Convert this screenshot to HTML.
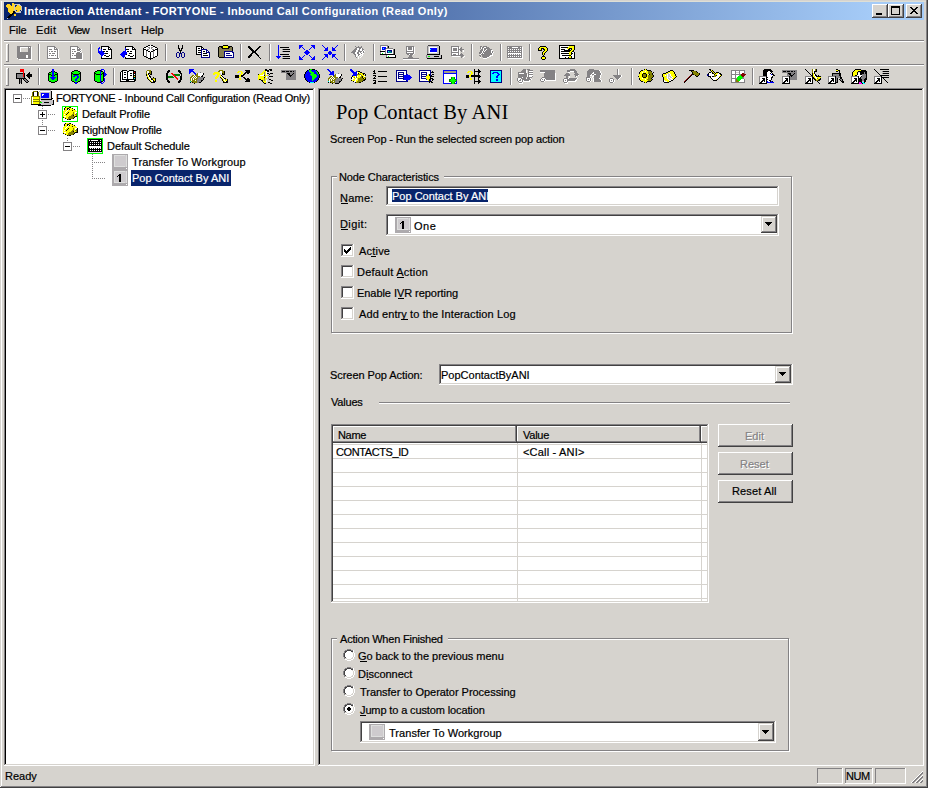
<!DOCTYPE html>
<html><head><meta charset="utf-8"><style>
html,body{margin:0;padding:0;width:929px;height:789px;overflow:hidden;background:#ffffff}
i{position:absolute;display:block}
b{position:absolute;font:11px "Liberation Sans",sans-serif;line-height:13px;white-space:pre;font-weight:normal;-webkit-text-stroke-width:0.2px}
svg{position:absolute}
</style></head><body>
<i style="left:0px;top:0px;width:929px;height:789px;background:#ffffff;"></i>
<i style="left:0px;top:0px;width:928px;height:788px;background:#d6d3ce;"></i>
<i style="left:0px;top:1px;width:926px;height:1px;background:#dedfd6;"></i>
<i style="left:1px;top:1px;width:1px;height:786px;background:#ffffff;"></i>
<i style="left:926px;top:0px;width:1px;height:787px;background:#848284;"></i>
<i style="left:927px;top:0px;width:1px;height:788px;background:#424142;"></i>
<i style="left:1px;top:786px;width:926px;height:1px;background:#848284;"></i>
<i style="left:0px;top:786px;width:1px;height:1px;background:#f7f3f7;"></i>
<i style="left:0px;top:787px;width:928px;height:1px;background:#424142;"></i>
<i style="left:4px;top:2px;width:920px;height:18px;background:linear-gradient(90deg,#08246b 0px,#a5cbf7 867px,#a5cbf7 920px);"></i>
<b style="left:24px;top:5px;color:#ffffff;letter-spacing:0.361px;font:bold 11px 'Liberation Sans';line-height:13px;-webkit-text-stroke-width:0;">Interaction Attendant - FORTYONE - Inbound Call Configuration (Read Only)</b>
<i style="left:872px;top:4px;width:16px;height:14px;background:#d6d3ce;"></i>
<i style="left:872px;top:4px;width:16px;height:1px;background:#ffffff;"></i>
<i style="left:872px;top:4px;width:1px;height:14px;background:#ffffff;"></i>
<i style="left:872px;top:17px;width:16px;height:1px;background:#424142;"></i>
<i style="left:887px;top:4px;width:1px;height:14px;background:#424142;"></i>
<i style="left:873px;top:5px;width:14px;height:1px;background:#d6d3ce;"></i>
<i style="left:873px;top:5px;width:1px;height:12px;background:#d6d3ce;"></i>
<i style="left:873px;top:16px;width:14px;height:1px;background:#848284;"></i>
<i style="left:886px;top:5px;width:1px;height:12px;background:#848284;"></i>
<i style="left:888px;top:4px;width:16px;height:14px;background:#d6d3ce;"></i>
<i style="left:888px;top:4px;width:16px;height:1px;background:#ffffff;"></i>
<i style="left:888px;top:4px;width:1px;height:14px;background:#ffffff;"></i>
<i style="left:888px;top:17px;width:16px;height:1px;background:#424142;"></i>
<i style="left:903px;top:4px;width:1px;height:14px;background:#424142;"></i>
<i style="left:889px;top:5px;width:14px;height:1px;background:#d6d3ce;"></i>
<i style="left:889px;top:5px;width:1px;height:12px;background:#d6d3ce;"></i>
<i style="left:889px;top:16px;width:14px;height:1px;background:#848284;"></i>
<i style="left:902px;top:5px;width:1px;height:12px;background:#848284;"></i>
<i style="left:906px;top:4px;width:16px;height:14px;background:#d6d3ce;"></i>
<i style="left:906px;top:4px;width:16px;height:1px;background:#ffffff;"></i>
<i style="left:906px;top:4px;width:1px;height:14px;background:#ffffff;"></i>
<i style="left:906px;top:17px;width:16px;height:1px;background:#424142;"></i>
<i style="left:921px;top:4px;width:1px;height:14px;background:#424142;"></i>
<i style="left:907px;top:5px;width:14px;height:1px;background:#d6d3ce;"></i>
<i style="left:907px;top:5px;width:1px;height:12px;background:#d6d3ce;"></i>
<i style="left:907px;top:16px;width:14px;height:1px;background:#848284;"></i>
<i style="left:920px;top:5px;width:1px;height:12px;background:#848284;"></i>
<i style="left:876px;top:13px;width:6px;height:2px;background:#000000;"></i>
<i style="left:891px;top:6px;width:9px;height:1px;background:#000000;"></i>
<i style="left:891px;top:6px;width:1px;height:9px;background:#000000;"></i>
<i style="left:891px;top:14px;width:9px;height:1px;background:#000000;"></i>
<i style="left:899px;top:6px;width:1px;height:9px;background:#000000;"></i>
<i style="left:891px;top:7px;width:9px;height:1px;background:#000000;"></i>
<svg style="position:absolute;left:906px;top:4px" width="16" height="14" shape-rendering="crispEdges"><rect x="4" y="3" width="2" height="1" fill="#000000"/><rect x="10" y="3" width="2" height="1" fill="#000000"/><rect x="5" y="4" width="2" height="1" fill="#000000"/><rect x="9" y="4" width="2" height="1" fill="#000000"/><rect x="6" y="5" width="2" height="1" fill="#000000"/><rect x="8" y="5" width="2" height="1" fill="#000000"/><rect x="7" y="6" width="2" height="1" fill="#000000"/><rect x="7" y="6" width="2" height="1" fill="#000000"/><rect x="8" y="7" width="2" height="1" fill="#000000"/><rect x="6" y="7" width="2" height="1" fill="#000000"/><rect x="9" y="8" width="2" height="1" fill="#000000"/><rect x="5" y="8" width="2" height="1" fill="#000000"/><rect x="10" y="9" width="2" height="1" fill="#000000"/><rect x="4" y="9" width="2" height="1" fill="#000000"/></svg>
<b style="left:9px;top:24px;color:#000000;letter-spacing:0.000px;">File</b>
<b style="left:36px;top:24px;color:#000000;letter-spacing:0.333px;">Edit</b>
<b style="left:68px;top:24px;color:#000000;letter-spacing:-0.667px;">View</b>
<b style="left:101px;top:24px;color:#000000;letter-spacing:0.600px;">Insert</b>
<b style="left:141px;top:24px;color:#000000;letter-spacing:0.000px;">Help</b>
<i style="left:4px;top:40px;width:920px;height:1px;background:#848284;"></i>
<i style="left:4px;top:41px;width:920px;height:1px;background:#ffffff;"></i>
<i style="left:4px;top:64px;width:920px;height:1px;background:#848284;"></i>
<i style="left:4px;top:65px;width:920px;height:1px;background:#ffffff;"></i>
<i style="left:6px;top:44px;width:1px;height:17px;background:#ffffff;"></i>
<i style="left:6px;top:44px;width:2px;height:1px;background:#ffffff;"></i>
<i style="left:8px;top:44px;width:1px;height:18px;background:#848284;"></i>
<i style="left:6px;top:61px;width:3px;height:1px;background:#848284;"></i>
<i style="left:6px;top:68px;width:1px;height:17px;background:#ffffff;"></i>
<i style="left:6px;top:68px;width:2px;height:1px;background:#ffffff;"></i>
<i style="left:8px;top:68px;width:1px;height:18px;background:#848284;"></i>
<i style="left:6px;top:85px;width:3px;height:1px;background:#848284;"></i>
<i style="left:38px;top:44px;width:1px;height:17px;background:#848284;"></i>
<i style="left:39px;top:44px;width:1px;height:17px;background:#ffffff;"></i>
<i style="left:90px;top:44px;width:1px;height:17px;background:#848284;"></i>
<i style="left:91px;top:44px;width:1px;height:17px;background:#ffffff;"></i>
<i style="left:165px;top:44px;width:1px;height:17px;background:#848284;"></i>
<i style="left:166px;top:44px;width:1px;height:17px;background:#ffffff;"></i>
<i style="left:240px;top:44px;width:1px;height:17px;background:#848284;"></i>
<i style="left:241px;top:44px;width:1px;height:17px;background:#ffffff;"></i>
<i style="left:269px;top:44px;width:1px;height:17px;background:#848284;"></i>
<i style="left:270px;top:44px;width:1px;height:17px;background:#ffffff;"></i>
<i style="left:344px;top:44px;width:1px;height:17px;background:#848284;"></i>
<i style="left:345px;top:44px;width:1px;height:17px;background:#ffffff;"></i>
<i style="left:373px;top:44px;width:1px;height:17px;background:#848284;"></i>
<i style="left:374px;top:44px;width:1px;height:17px;background:#ffffff;"></i>
<i style="left:471px;top:44px;width:1px;height:17px;background:#848284;"></i>
<i style="left:472px;top:44px;width:1px;height:17px;background:#ffffff;"></i>
<i style="left:500px;top:44px;width:1px;height:17px;background:#848284;"></i>
<i style="left:501px;top:44px;width:1px;height:17px;background:#ffffff;"></i>
<i style="left:529px;top:44px;width:1px;height:17px;background:#848284;"></i>
<i style="left:530px;top:44px;width:1px;height:17px;background:#ffffff;"></i>
<i style="left:38px;top:68px;width:1px;height:17px;background:#848284;"></i>
<i style="left:39px;top:68px;width:1px;height:17px;background:#ffffff;"></i>
<i style="left:113px;top:68px;width:1px;height:17px;background:#848284;"></i>
<i style="left:114px;top:68px;width:1px;height:17px;background:#ffffff;"></i>
<i style="left:510px;top:68px;width:1px;height:17px;background:#848284;"></i>
<i style="left:511px;top:68px;width:1px;height:17px;background:#ffffff;"></i>
<i style="left:631px;top:68px;width:1px;height:17px;background:#848284;"></i>
<i style="left:632px;top:68px;width:1px;height:17px;background:#ffffff;"></i>
<i style="left:752px;top:68px;width:1px;height:17px;background:#848284;"></i>
<i style="left:753px;top:68px;width:1px;height:17px;background:#ffffff;"></i>
<i style="left:4px;top:88px;width:311px;height:678px;background:#ffffff;"></i>
<i style="left:4px;top:88px;width:311px;height:1px;background:#848284;"></i>
<i style="left:4px;top:88px;width:1px;height:678px;background:#848284;"></i>
<i style="left:4px;top:765px;width:311px;height:1px;background:#ffffff;"></i>
<i style="left:314px;top:88px;width:1px;height:678px;background:#ffffff;"></i>
<i style="left:5px;top:89px;width:309px;height:1px;background:#000000;"></i>
<i style="left:5px;top:89px;width:1px;height:676px;background:#000000;"></i>
<i style="left:5px;top:764px;width:309px;height:1px;background:#d6d3ce;"></i>
<i style="left:313px;top:89px;width:1px;height:676px;background:#d6d3ce;"></i>
<b style="left:56px;top:92px;color:#000000;letter-spacing:-0.188px;">FORTYONE - Inbound Call Configuration (Read Only)</b>
<b style="left:82px;top:108px;color:#000000;letter-spacing:-0.071px;">Default Profile</b>
<b style="left:82px;top:124px;color:#000000;letter-spacing:-0.133px;">RightNow Profile</b>
<b style="left:107px;top:140px;color:#000000;letter-spacing:-0.067px;">Default Schedule</b>
<b style="left:132px;top:156px;color:#000000;letter-spacing:0.100px;">Transfer To Workgroup</b>
<i style="left:131px;top:170px;width:100px;height:16px;background:#08246b;"></i>
<b style="left:132px;top:172px;color:#ffffff;letter-spacing:0.000px;">Pop Contact By ANI</b>
<i style="left:318px;top:88px;width:606px;height:678px;background:#d6d3ce;"></i>
<i style="left:318px;top:88px;width:606px;height:1px;background:#848284;"></i>
<i style="left:318px;top:88px;width:1px;height:678px;background:#848284;"></i>
<i style="left:318px;top:765px;width:606px;height:1px;background:#ffffff;"></i>
<i style="left:923px;top:88px;width:1px;height:678px;background:#ffffff;"></i>
<i style="left:319px;top:89px;width:604px;height:1px;background:#000000;"></i>
<i style="left:319px;top:89px;width:1px;height:676px;background:#000000;"></i>
<i style="left:319px;top:764px;width:604px;height:1px;background:#d6d3ce;"></i>
<i style="left:922px;top:89px;width:1px;height:676px;background:#d6d3ce;"></i>
<b style="left:336px;top:100px;color:#000000;letter-spacing:0.118px;font:normal 20.5px 'Liberation Serif';line-height:24px;-webkit-text-stroke-width:0;">Pop Contact By ANI</b>
<b style="left:330px;top:133px;color:#000000;letter-spacing:-0.109px;">Screen Pop - Run the selected screen pop action</b>
<i style="left:332px;top:177px;width:461px;height:1px;background:#ffffff;"></i>
<i style="left:332px;top:177px;width:1px;height:157px;background:#ffffff;"></i>
<i style="left:332px;top:333px;width:461px;height:1px;background:#ffffff;"></i>
<i style="left:792px;top:177px;width:1px;height:157px;background:#ffffff;"></i>
<i style="left:331px;top:176px;width:461px;height:1px;background:#848284;"></i>
<i style="left:331px;top:176px;width:1px;height:157px;background:#848284;"></i>
<i style="left:331px;top:332px;width:461px;height:1px;background:#848284;"></i>
<i style="left:791px;top:176px;width:1px;height:157px;background:#848284;"></i>
<i style="left:337px;top:170px;width:107px;height:12px;background:#d6d3ce;"></i>
<b style="left:339px;top:171px;color:#000000;letter-spacing:-0.105px;">Node Characteristics</b>
<b style="left:340px;top:192px;color:#000000;letter-spacing:0.250px;">Name:</b>
<i style="left:341px;top:203px;width:7px;height:1px;background:#000000;"></i>
<i style="left:386px;top:186px;width:393px;height:20px;background:#ffffff;"></i>
<i style="left:386px;top:186px;width:393px;height:1px;background:#848284;"></i>
<i style="left:386px;top:186px;width:1px;height:20px;background:#848284;"></i>
<i style="left:386px;top:205px;width:393px;height:1px;background:#ffffff;"></i>
<i style="left:778px;top:186px;width:1px;height:20px;background:#ffffff;"></i>
<i style="left:387px;top:187px;width:391px;height:1px;background:#424142;"></i>
<i style="left:387px;top:187px;width:1px;height:18px;background:#424142;"></i>
<i style="left:387px;top:204px;width:391px;height:1px;background:#d6d3ce;"></i>
<i style="left:777px;top:187px;width:1px;height:18px;background:#d6d3ce;"></i>
<i style="left:392px;top:189px;width:96px;height:13px;background:#08246b;"></i>
<b style="left:392px;top:190px;color:#ffffff;letter-spacing:0.000px;">Pop Contact By ANI</b>
<b style="left:340px;top:218px;color:#000000;letter-spacing:0.400px;">Digit:</b>
<i style="left:341px;top:229px;width:7px;height:1px;background:#000000;"></i>
<i style="left:386px;top:214px;width:393px;height:22px;background:#ffffff;"></i>
<i style="left:386px;top:214px;width:393px;height:1px;background:#848284;"></i>
<i style="left:386px;top:214px;width:1px;height:22px;background:#848284;"></i>
<i style="left:386px;top:235px;width:393px;height:1px;background:#ffffff;"></i>
<i style="left:778px;top:214px;width:1px;height:22px;background:#ffffff;"></i>
<i style="left:387px;top:215px;width:391px;height:1px;background:#424142;"></i>
<i style="left:387px;top:215px;width:1px;height:20px;background:#424142;"></i>
<i style="left:387px;top:234px;width:391px;height:1px;background:#d6d3ce;"></i>
<i style="left:777px;top:215px;width:1px;height:20px;background:#d6d3ce;"></i>
<i style="left:761px;top:216px;width:16px;height:17px;background:#d6d3ce;"></i>
<i style="left:761px;top:216px;width:16px;height:1px;background:#d6d3ce;"></i>
<i style="left:761px;top:216px;width:1px;height:17px;background:#d6d3ce;"></i>
<i style="left:761px;top:232px;width:16px;height:1px;background:#424142;"></i>
<i style="left:776px;top:216px;width:1px;height:17px;background:#424142;"></i>
<i style="left:762px;top:217px;width:14px;height:1px;background:#ffffff;"></i>
<i style="left:762px;top:217px;width:1px;height:15px;background:#ffffff;"></i>
<i style="left:762px;top:231px;width:14px;height:1px;background:#848284;"></i>
<i style="left:775px;top:217px;width:1px;height:15px;background:#848284;"></i>
<b style="left:414px;top:220px;color:#000000;letter-spacing:0.500px;">One</b>
<i style="left:341px;top:244px;width:13px;height:13px;background:#ffffff;"></i>
<i style="left:341px;top:244px;width:13px;height:1px;background:#848284;"></i>
<i style="left:341px;top:244px;width:1px;height:13px;background:#848284;"></i>
<i style="left:341px;top:256px;width:13px;height:1px;background:#ffffff;"></i>
<i style="left:353px;top:244px;width:1px;height:13px;background:#ffffff;"></i>
<i style="left:342px;top:245px;width:11px;height:1px;background:#424142;"></i>
<i style="left:342px;top:245px;width:1px;height:11px;background:#424142;"></i>
<i style="left:342px;top:255px;width:11px;height:1px;background:#d6d3ce;"></i>
<i style="left:352px;top:245px;width:1px;height:11px;background:#d6d3ce;"></i>
<b style="left:359px;top:245px;color:#000000;letter-spacing:0.200px;">Active</b>
<i style="left:341px;top:265px;width:13px;height:13px;background:#ffffff;"></i>
<i style="left:341px;top:265px;width:13px;height:1px;background:#848284;"></i>
<i style="left:341px;top:265px;width:1px;height:13px;background:#848284;"></i>
<i style="left:341px;top:277px;width:13px;height:1px;background:#ffffff;"></i>
<i style="left:353px;top:265px;width:1px;height:13px;background:#ffffff;"></i>
<i style="left:342px;top:266px;width:11px;height:1px;background:#424142;"></i>
<i style="left:342px;top:266px;width:1px;height:11px;background:#424142;"></i>
<i style="left:342px;top:276px;width:11px;height:1px;background:#d6d3ce;"></i>
<i style="left:352px;top:266px;width:1px;height:11px;background:#d6d3ce;"></i>
<b style="left:357px;top:266px;color:#000000;letter-spacing:0.231px;">Default Action</b>
<i style="left:341px;top:286px;width:13px;height:13px;background:#ffffff;"></i>
<i style="left:341px;top:286px;width:13px;height:1px;background:#848284;"></i>
<i style="left:341px;top:286px;width:1px;height:13px;background:#848284;"></i>
<i style="left:341px;top:298px;width:13px;height:1px;background:#ffffff;"></i>
<i style="left:353px;top:286px;width:1px;height:13px;background:#ffffff;"></i>
<i style="left:342px;top:287px;width:11px;height:1px;background:#424142;"></i>
<i style="left:342px;top:287px;width:1px;height:11px;background:#424142;"></i>
<i style="left:342px;top:297px;width:11px;height:1px;background:#d6d3ce;"></i>
<i style="left:352px;top:287px;width:1px;height:11px;background:#d6d3ce;"></i>
<b style="left:357px;top:287px;color:#000000;letter-spacing:-0.053px;">Enable IVR reporting</b>
<i style="left:341px;top:307px;width:13px;height:13px;background:#ffffff;"></i>
<i style="left:341px;top:307px;width:13px;height:1px;background:#848284;"></i>
<i style="left:341px;top:307px;width:1px;height:13px;background:#848284;"></i>
<i style="left:341px;top:319px;width:13px;height:1px;background:#ffffff;"></i>
<i style="left:353px;top:307px;width:1px;height:13px;background:#ffffff;"></i>
<i style="left:342px;top:308px;width:11px;height:1px;background:#424142;"></i>
<i style="left:342px;top:308px;width:1px;height:11px;background:#424142;"></i>
<i style="left:342px;top:318px;width:11px;height:1px;background:#d6d3ce;"></i>
<i style="left:352px;top:308px;width:1px;height:11px;background:#d6d3ce;"></i>
<b style="left:359px;top:308px;color:#000000;letter-spacing:0.097px;">Add entry to the Interaction Log</b>
<svg style="position:absolute;left:341px;top:244px" width="13" height="13" shape-rendering="crispEdges"><path d="M9 3h1v1h-1zM8 4h1v1h-1zM9 4h1v1h-1zM3 5h1v1h-1zM7 5h1v1h-1zM8 5h1v1h-1zM9 5h1v1h-1zM3 6h1v1h-1zM4 6h1v1h-1zM6 6h1v1h-1zM7 6h1v1h-1zM8 6h1v1h-1zM3 7h1v1h-1zM4 7h1v1h-1zM5 7h1v1h-1zM6 7h1v1h-1zM7 7h1v1h-1zM4 8h1v1h-1zM5 8h1v1h-1zM6 8h1v1h-1zM5 9h1v1h-1z" fill="#000000"/></svg>
<b style="left:330px;top:369px;color:#000000;letter-spacing:-0.059px;">Screen Pop Action:</b>
<i style="left:439px;top:364px;width:354px;height:21px;background:#ffffff;"></i>
<i style="left:439px;top:364px;width:354px;height:1px;background:#848284;"></i>
<i style="left:439px;top:364px;width:1px;height:21px;background:#848284;"></i>
<i style="left:439px;top:384px;width:354px;height:1px;background:#ffffff;"></i>
<i style="left:792px;top:364px;width:1px;height:21px;background:#ffffff;"></i>
<i style="left:440px;top:365px;width:352px;height:1px;background:#424142;"></i>
<i style="left:440px;top:365px;width:1px;height:19px;background:#424142;"></i>
<i style="left:440px;top:383px;width:352px;height:1px;background:#d6d3ce;"></i>
<i style="left:791px;top:365px;width:1px;height:19px;background:#d6d3ce;"></i>
<i style="left:775px;top:366px;width:16px;height:17px;background:#d6d3ce;"></i>
<i style="left:775px;top:366px;width:16px;height:1px;background:#d6d3ce;"></i>
<i style="left:775px;top:366px;width:1px;height:17px;background:#d6d3ce;"></i>
<i style="left:775px;top:382px;width:16px;height:1px;background:#424142;"></i>
<i style="left:790px;top:366px;width:1px;height:17px;background:#424142;"></i>
<i style="left:776px;top:367px;width:14px;height:1px;background:#ffffff;"></i>
<i style="left:776px;top:367px;width:1px;height:15px;background:#ffffff;"></i>
<i style="left:776px;top:381px;width:14px;height:1px;background:#848284;"></i>
<i style="left:789px;top:367px;width:1px;height:15px;background:#848284;"></i>
<b style="left:441px;top:369px;color:#000000;letter-spacing:0.000px;">PopContactByANI</b>
<b style="left:331px;top:396px;color:#000000;letter-spacing:-0.200px;">Values</b>
<i style="left:379px;top:402px;width:411px;height:1px;background:#848284;"></i>
<i style="left:379px;top:403px;width:411px;height:1px;background:#ffffff;"></i>
<i style="left:331px;top:424px;width:378px;height:179px;background:#ffffff;"></i>
<i style="left:331px;top:424px;width:378px;height:1px;background:#848284;"></i>
<i style="left:331px;top:424px;width:1px;height:179px;background:#848284;"></i>
<i style="left:331px;top:602px;width:378px;height:1px;background:#ffffff;"></i>
<i style="left:708px;top:424px;width:1px;height:179px;background:#ffffff;"></i>
<i style="left:332px;top:425px;width:376px;height:1px;background:#424142;"></i>
<i style="left:332px;top:425px;width:1px;height:177px;background:#424142;"></i>
<i style="left:332px;top:601px;width:376px;height:1px;background:#d6d3ce;"></i>
<i style="left:707px;top:425px;width:1px;height:177px;background:#d6d3ce;"></i>
<i style="left:333px;top:426px;width:184px;height:17px;background:#d6d3ce;"></i>
<i style="left:333px;top:426px;width:184px;height:1px;background:#ffffff;"></i>
<i style="left:333px;top:426px;width:1px;height:17px;background:#ffffff;"></i>
<i style="left:333px;top:441px;width:184px;height:1px;background:#848284;"></i>
<i style="left:515px;top:426px;width:1px;height:16px;background:#848284;"></i>
<i style="left:333px;top:442px;width:184px;height:1px;background:#424142;"></i>
<i style="left:516px;top:426px;width:1px;height:17px;background:#424142;"></i>
<i style="left:517px;top:426px;width:184px;height:17px;background:#d6d3ce;"></i>
<i style="left:517px;top:426px;width:184px;height:1px;background:#ffffff;"></i>
<i style="left:517px;top:426px;width:1px;height:17px;background:#ffffff;"></i>
<i style="left:517px;top:441px;width:184px;height:1px;background:#848284;"></i>
<i style="left:699px;top:426px;width:1px;height:16px;background:#848284;"></i>
<i style="left:517px;top:442px;width:184px;height:1px;background:#424142;"></i>
<i style="left:700px;top:426px;width:1px;height:17px;background:#424142;"></i>
<i style="left:701px;top:426px;width:6px;height:17px;background:#d6d3ce;"></i>
<i style="left:701px;top:426px;width:6px;height:1px;background:#ffffff;"></i>
<i style="left:701px;top:426px;width:1px;height:17px;background:#ffffff;"></i>
<i style="left:701px;top:441px;width:6px;height:1px;background:#848284;"></i>
<i style="left:701px;top:442px;width:6px;height:1px;background:#424142;"></i>
<i style="left:333px;top:444px;width:374px;height:1px;background:#d6d3ce;"></i>
<i style="left:333px;top:458px;width:374px;height:1px;background:#d6d3ce;"></i>
<i style="left:333px;top:472px;width:374px;height:1px;background:#d6d3ce;"></i>
<i style="left:333px;top:486px;width:374px;height:1px;background:#d6d3ce;"></i>
<i style="left:333px;top:500px;width:374px;height:1px;background:#d6d3ce;"></i>
<i style="left:333px;top:514px;width:374px;height:1px;background:#d6d3ce;"></i>
<i style="left:333px;top:528px;width:374px;height:1px;background:#d6d3ce;"></i>
<i style="left:333px;top:542px;width:374px;height:1px;background:#d6d3ce;"></i>
<i style="left:333px;top:556px;width:374px;height:1px;background:#d6d3ce;"></i>
<i style="left:333px;top:570px;width:374px;height:1px;background:#d6d3ce;"></i>
<i style="left:333px;top:584px;width:374px;height:1px;background:#d6d3ce;"></i>
<i style="left:333px;top:598px;width:374px;height:1px;background:#d6d3ce;"></i>
<i style="left:517px;top:443px;width:1px;height:158px;background:#d6d3ce;"></i>
<i style="left:701px;top:443px;width:1px;height:158px;background:#d6d3ce;"></i>
<b style="left:338px;top:429px;color:#000000;letter-spacing:-0.333px;">Name</b>
<b style="left:523px;top:429px;color:#000000;letter-spacing:-0.250px;">Value</b>
<b style="left:336px;top:446px;color:#000000;letter-spacing:-0.400px;">CONTACTS_ID</b>
<b style="left:523px;top:446px;color:#000000;letter-spacing:0.182px;">&lt;Call - ANI&gt;</b>
<i style="left:718px;top:424px;width:75px;height:23px;background:#d6d3ce;"></i>
<i style="left:718px;top:424px;width:75px;height:1px;background:#ffffff;"></i>
<i style="left:718px;top:424px;width:1px;height:23px;background:#ffffff;"></i>
<i style="left:718px;top:446px;width:75px;height:1px;background:#424142;"></i>
<i style="left:792px;top:424px;width:1px;height:23px;background:#424142;"></i>
<i style="left:719px;top:425px;width:73px;height:1px;background:#d6d3ce;"></i>
<i style="left:719px;top:425px;width:1px;height:21px;background:#d6d3ce;"></i>
<i style="left:719px;top:445px;width:73px;height:1px;background:#848284;"></i>
<i style="left:791px;top:425px;width:1px;height:21px;background:#848284;"></i>
<i style="left:718px;top:452px;width:75px;height:23px;background:#d6d3ce;"></i>
<i style="left:718px;top:452px;width:75px;height:1px;background:#ffffff;"></i>
<i style="left:718px;top:452px;width:1px;height:23px;background:#ffffff;"></i>
<i style="left:718px;top:474px;width:75px;height:1px;background:#424142;"></i>
<i style="left:792px;top:452px;width:1px;height:23px;background:#424142;"></i>
<i style="left:719px;top:453px;width:73px;height:1px;background:#d6d3ce;"></i>
<i style="left:719px;top:453px;width:1px;height:21px;background:#d6d3ce;"></i>
<i style="left:719px;top:473px;width:73px;height:1px;background:#848284;"></i>
<i style="left:791px;top:453px;width:1px;height:21px;background:#848284;"></i>
<i style="left:718px;top:480px;width:75px;height:23px;background:#d6d3ce;"></i>
<i style="left:718px;top:480px;width:75px;height:1px;background:#ffffff;"></i>
<i style="left:718px;top:480px;width:1px;height:23px;background:#ffffff;"></i>
<i style="left:718px;top:502px;width:75px;height:1px;background:#424142;"></i>
<i style="left:792px;top:480px;width:1px;height:23px;background:#424142;"></i>
<i style="left:719px;top:481px;width:73px;height:1px;background:#d6d3ce;"></i>
<i style="left:719px;top:481px;width:1px;height:21px;background:#d6d3ce;"></i>
<i style="left:719px;top:501px;width:73px;height:1px;background:#848284;"></i>
<i style="left:791px;top:481px;width:1px;height:21px;background:#848284;"></i>
<b style="left:746px;top:431px;color:#ffffff;letter-spacing:0.000px;">Edit</b>
<b style="left:745px;top:430px;color:#848284;letter-spacing:0.000px;">Edit</b>
<b style="left:741px;top:459px;color:#ffffff;letter-spacing:0.000px;">Reset</b>
<b style="left:740px;top:458px;color:#848284;letter-spacing:0.000px;">Reset</b>
<b style="left:732px;top:485px;color:#000000;letter-spacing:0.125px;">Reset All</b>
<i style="left:332px;top:639px;width:458px;height:1px;background:#ffffff;"></i>
<i style="left:332px;top:639px;width:1px;height:113px;background:#ffffff;"></i>
<i style="left:332px;top:751px;width:458px;height:1px;background:#ffffff;"></i>
<i style="left:789px;top:639px;width:1px;height:113px;background:#ffffff;"></i>
<i style="left:331px;top:638px;width:458px;height:1px;background:#848284;"></i>
<i style="left:331px;top:638px;width:1px;height:113px;background:#848284;"></i>
<i style="left:331px;top:750px;width:458px;height:1px;background:#848284;"></i>
<i style="left:788px;top:638px;width:1px;height:113px;background:#848284;"></i>
<i style="left:337px;top:632px;width:111px;height:12px;background:#d6d3ce;"></i>
<b style="left:340px;top:633px;color:#000000;letter-spacing:-0.211px;">Action When Finished</b>
<svg style="position:absolute;left:343px;top:649px" width="12" height="12" shape-rendering="crispEdges"><path d="M4 0h4v1h-4zM2 1h2v1h-2zM8 1h2v1h-2zM1 2h1v2h-1zM0 4h1v4h-1zM1 8h1v2h-1z" fill="#848284"/><path d="M4 1h4v1h-4zM2 2h2v1h-2zM8 2h2v1h-2zM2 3h1v1h-1zM1 4h1v4h-1zM2 8h1v1h-1z" fill="#424142"/><path d="M10 1h1v1h-1zM10 2h1v2h-1zM11 4h1v4h-1zM10 8h1v2h-1zM8 10h2v1h-2zM4 11h4v1h-4zM2 10h2v1h-2z" fill="#ffffff"/><path d="M9 3h1v1h-1zM10 4h1v4h-1zM9 8h1v1h-1zM8 9h2v1h-2zM4 10h4v1h-4zM2 9h2v1h-2z" fill="#d6d3ce"/><path d="M4 2h4v1h-4zM3 3h6v1h-6zM2 4h8v4h-8zM3 8h6v1h-6zM4 9h4v1h-4z" fill="#ffffff"/></svg>
<b style="left:358px;top:650px;color:#000000;letter-spacing:-0.037px;">Go back to the previous menu</b>
<svg style="position:absolute;left:343px;top:667px" width="12" height="12" shape-rendering="crispEdges"><path d="M4 0h4v1h-4zM2 1h2v1h-2zM8 1h2v1h-2zM1 2h1v2h-1zM0 4h1v4h-1zM1 8h1v2h-1z" fill="#848284"/><path d="M4 1h4v1h-4zM2 2h2v1h-2zM8 2h2v1h-2zM2 3h1v1h-1zM1 4h1v4h-1zM2 8h1v1h-1z" fill="#424142"/><path d="M10 1h1v1h-1zM10 2h1v2h-1zM11 4h1v4h-1zM10 8h1v2h-1zM8 10h2v1h-2zM4 11h4v1h-4zM2 10h2v1h-2z" fill="#ffffff"/><path d="M9 3h1v1h-1zM10 4h1v4h-1zM9 8h1v1h-1zM8 9h2v1h-2zM4 10h4v1h-4zM2 9h2v1h-2z" fill="#d6d3ce"/><path d="M4 2h4v1h-4zM3 3h6v1h-6zM2 4h8v4h-8zM3 8h6v1h-6zM4 9h4v1h-4z" fill="#ffffff"/></svg>
<b style="left:358px;top:668px;color:#000000;letter-spacing:0.000px;">Disconnect</b>
<svg style="position:absolute;left:343px;top:685px" width="12" height="12" shape-rendering="crispEdges"><path d="M4 0h4v1h-4zM2 1h2v1h-2zM8 1h2v1h-2zM1 2h1v2h-1zM0 4h1v4h-1zM1 8h1v2h-1z" fill="#848284"/><path d="M4 1h4v1h-4zM2 2h2v1h-2zM8 2h2v1h-2zM2 3h1v1h-1zM1 4h1v4h-1zM2 8h1v1h-1z" fill="#424142"/><path d="M10 1h1v1h-1zM10 2h1v2h-1zM11 4h1v4h-1zM10 8h1v2h-1zM8 10h2v1h-2zM4 11h4v1h-4zM2 10h2v1h-2z" fill="#ffffff"/><path d="M9 3h1v1h-1zM10 4h1v4h-1zM9 8h1v1h-1zM8 9h2v1h-2zM4 10h4v1h-4zM2 9h2v1h-2z" fill="#d6d3ce"/><path d="M4 2h4v1h-4zM3 3h6v1h-6zM2 4h8v4h-8zM3 8h6v1h-6zM4 9h4v1h-4z" fill="#ffffff"/></svg>
<b style="left:360px;top:686px;color:#000000;letter-spacing:-0.033px;">Transfer to Operator Processing</b>
<svg style="position:absolute;left:343px;top:703px" width="12" height="12" shape-rendering="crispEdges"><path d="M4 0h4v1h-4zM2 1h2v1h-2zM8 1h2v1h-2zM1 2h1v2h-1zM0 4h1v4h-1zM1 8h1v2h-1z" fill="#848284"/><path d="M4 1h4v1h-4zM2 2h2v1h-2zM8 2h2v1h-2zM2 3h1v1h-1zM1 4h1v4h-1zM2 8h1v1h-1z" fill="#424142"/><path d="M10 1h1v1h-1zM10 2h1v2h-1zM11 4h1v4h-1zM10 8h1v2h-1zM8 10h2v1h-2zM4 11h4v1h-4zM2 10h2v1h-2z" fill="#ffffff"/><path d="M9 3h1v1h-1zM10 4h1v4h-1zM9 8h1v1h-1zM8 9h2v1h-2zM4 10h4v1h-4zM2 9h2v1h-2z" fill="#d6d3ce"/><path d="M4 2h4v1h-4zM3 3h6v1h-6zM2 4h8v4h-8zM3 8h6v1h-6zM4 9h4v1h-4z" fill="#ffffff"/><path d="M5 4h2v1h-2zM4 5h4v2h-4zM5 7h2v1h-2z" fill="#000000"/></svg>
<b style="left:360px;top:704px;color:#000000;letter-spacing:-0.125px;">Jump to a custom location</b>
<i style="left:360px;top:721px;width:416px;height:22px;background:#ffffff;"></i>
<i style="left:360px;top:721px;width:416px;height:1px;background:#848284;"></i>
<i style="left:360px;top:721px;width:1px;height:22px;background:#848284;"></i>
<i style="left:360px;top:742px;width:416px;height:1px;background:#ffffff;"></i>
<i style="left:775px;top:721px;width:1px;height:22px;background:#ffffff;"></i>
<i style="left:361px;top:722px;width:414px;height:1px;background:#424142;"></i>
<i style="left:361px;top:722px;width:1px;height:20px;background:#424142;"></i>
<i style="left:361px;top:741px;width:414px;height:1px;background:#d6d3ce;"></i>
<i style="left:774px;top:722px;width:1px;height:20px;background:#d6d3ce;"></i>
<i style="left:758px;top:723px;width:16px;height:18px;background:#d6d3ce;"></i>
<i style="left:758px;top:723px;width:16px;height:1px;background:#d6d3ce;"></i>
<i style="left:758px;top:723px;width:1px;height:18px;background:#d6d3ce;"></i>
<i style="left:758px;top:740px;width:16px;height:1px;background:#424142;"></i>
<i style="left:773px;top:723px;width:1px;height:18px;background:#424142;"></i>
<i style="left:759px;top:724px;width:14px;height:1px;background:#ffffff;"></i>
<i style="left:759px;top:724px;width:1px;height:16px;background:#ffffff;"></i>
<i style="left:759px;top:739px;width:14px;height:1px;background:#848284;"></i>
<i style="left:772px;top:724px;width:1px;height:16px;background:#848284;"></i>
<b style="left:389px;top:727px;color:#000000;letter-spacing:0.050px;">Transfer To Workgroup</b>
<b style="left:5px;top:770px;color:#000000;letter-spacing:0.000px;">Ready</b>
<i style="left:817px;top:768px;width:26px;height:1px;background:#848284;"></i>
<i style="left:817px;top:768px;width:1px;height:16px;background:#848284;"></i>
<i style="left:817px;top:783px;width:26px;height:1px;background:#ffffff;"></i>
<i style="left:842px;top:768px;width:1px;height:16px;background:#ffffff;"></i>
<i style="left:845px;top:768px;width:28px;height:1px;background:#848284;"></i>
<i style="left:845px;top:768px;width:1px;height:16px;background:#848284;"></i>
<i style="left:845px;top:783px;width:28px;height:1px;background:#ffffff;"></i>
<i style="left:872px;top:768px;width:1px;height:16px;background:#ffffff;"></i>
<i style="left:875px;top:768px;width:31px;height:1px;background:#848284;"></i>
<i style="left:875px;top:768px;width:1px;height:16px;background:#848284;"></i>
<i style="left:875px;top:783px;width:31px;height:1px;background:#ffffff;"></i>
<i style="left:905px;top:768px;width:1px;height:16px;background:#ffffff;"></i>
<b style="left:846px;top:770px;color:#000000;letter-spacing:-0.500px;">NUM</b>
<svg style="position:absolute;left:911px;top:771px" width="12" height="12" shape-rendering="crispEdges"><rect x="0" y="11" width="1" height="1" fill="#ffffff"/><rect x="1" y="10" width="1" height="1" fill="#ffffff"/><rect x="1" y="11" width="1" height="1" fill="#848284"/><rect x="2" y="9" width="1" height="1" fill="#ffffff"/><rect x="2" y="10" width="1" height="1" fill="#848284"/><rect x="2" y="11" width="1" height="1" fill="#848284"/><rect x="3" y="8" width="1" height="1" fill="#ffffff"/><rect x="3" y="9" width="1" height="1" fill="#848284"/><rect x="3" y="10" width="1" height="1" fill="#848284"/><rect x="4" y="7" width="1" height="1" fill="#ffffff"/><rect x="4" y="8" width="1" height="1" fill="#848284"/><rect x="4" y="9" width="1" height="1" fill="#848284"/><rect x="4" y="11" width="1" height="1" fill="#ffffff"/><rect x="5" y="6" width="1" height="1" fill="#ffffff"/><rect x="5" y="7" width="1" height="1" fill="#848284"/><rect x="5" y="8" width="1" height="1" fill="#848284"/><rect x="5" y="10" width="1" height="1" fill="#ffffff"/><rect x="5" y="11" width="1" height="1" fill="#848284"/><rect x="6" y="5" width="1" height="1" fill="#ffffff"/><rect x="6" y="6" width="1" height="1" fill="#848284"/><rect x="6" y="7" width="1" height="1" fill="#848284"/><rect x="6" y="9" width="1" height="1" fill="#ffffff"/><rect x="6" y="10" width="1" height="1" fill="#848284"/><rect x="6" y="11" width="1" height="1" fill="#848284"/><rect x="7" y="4" width="1" height="1" fill="#ffffff"/><rect x="7" y="5" width="1" height="1" fill="#848284"/><rect x="7" y="6" width="1" height="1" fill="#848284"/><rect x="7" y="8" width="1" height="1" fill="#ffffff"/><rect x="7" y="9" width="1" height="1" fill="#848284"/><rect x="7" y="10" width="1" height="1" fill="#848284"/><rect x="8" y="3" width="1" height="1" fill="#ffffff"/><rect x="8" y="4" width="1" height="1" fill="#848284"/><rect x="8" y="5" width="1" height="1" fill="#848284"/><rect x="8" y="7" width="1" height="1" fill="#ffffff"/><rect x="8" y="8" width="1" height="1" fill="#848284"/><rect x="8" y="9" width="1" height="1" fill="#848284"/><rect x="8" y="11" width="1" height="1" fill="#ffffff"/><rect x="9" y="2" width="1" height="1" fill="#ffffff"/><rect x="9" y="3" width="1" height="1" fill="#848284"/><rect x="9" y="4" width="1" height="1" fill="#848284"/><rect x="9" y="6" width="1" height="1" fill="#ffffff"/><rect x="9" y="7" width="1" height="1" fill="#848284"/><rect x="9" y="8" width="1" height="1" fill="#848284"/><rect x="9" y="10" width="1" height="1" fill="#ffffff"/><rect x="9" y="11" width="1" height="1" fill="#848284"/><rect x="10" y="1" width="1" height="1" fill="#ffffff"/><rect x="10" y="2" width="1" height="1" fill="#848284"/><rect x="10" y="3" width="1" height="1" fill="#848284"/><rect x="10" y="5" width="1" height="1" fill="#ffffff"/><rect x="10" y="6" width="1" height="1" fill="#848284"/><rect x="10" y="7" width="1" height="1" fill="#848284"/><rect x="10" y="9" width="1" height="1" fill="#ffffff"/><rect x="10" y="10" width="1" height="1" fill="#848284"/><rect x="10" y="11" width="1" height="1" fill="#848284"/><rect x="11" y="0" width="1" height="1" fill="#ffffff"/><rect x="11" y="1" width="1" height="1" fill="#848284"/><rect x="11" y="2" width="1" height="1" fill="#848284"/><rect x="11" y="4" width="1" height="1" fill="#ffffff"/><rect x="11" y="5" width="1" height="1" fill="#848284"/><rect x="11" y="6" width="1" height="1" fill="#848284"/><rect x="11" y="8" width="1" height="1" fill="#ffffff"/><rect x="11" y="9" width="1" height="1" fill="#848284"/><rect x="11" y="10" width="1" height="1" fill="#848284"/></svg>
<svg style="left:16px;top:45px" width="16" height="15" shape-rendering="crispEdges"><path fill="#848284" d="M1 1h14v1h-14zM1 2h3v1h-3zM12 2h1v1h-1zM14 2h1v1h-1zM1 3h3v1h-3zM12 3h3v1h-3zM1 4h3v1h-3zM12 4h3v1h-3zM1 5h3v1h-3zM12 5h3v1h-3zM1 6h3v1h-3zM12 6h3v1h-3zM1 7h14v1h-14zM1 8h14v1h-14zM1 9h14v1h-14zM1 10h9v1h-9zM12 10h3v1h-3zM1 11h9v1h-9zM12 11h3v1h-3zM1 12h9v1h-9zM12 12h3v1h-3zM2 13h13v1h-13z"/><path fill="#ffffff" d="M4 2h8v1h-8zM13 2h1v1h-1zM15 2h1v1h-1zM4 3h1v1h-1zM15 3h1v1h-1zM4 4h1v1h-1zM15 4h1v1h-1zM4 5h1v1h-1zM15 5h1v1h-1zM4 6h1v1h-1zM15 6h1v1h-1zM15 7h1v1h-1zM15 8h1v1h-1zM15 9h1v1h-1zM10 10h2v1h-2zM15 10h1v1h-1zM10 11h2v1h-2zM15 11h1v1h-1zM10 12h2v1h-2zM15 12h1v1h-1zM1 13h1v1h-1zM15 13h1v1h-1zM3 14h13v1h-13z"/><path fill="#d6d3ce" d="M5 3h7v1h-7zM5 4h7v1h-7zM5 5h7v1h-7zM5 6h7v1h-7z"/></svg>
<svg style="left:45px;top:45px" width="16" height="15" shape-rendering="crispEdges"><path fill="#848284" d="M2 1h8v1h-8zM2 2h1v1h-1zM9 2h2v1h-2zM2 3h1v1h-1zM9 3h1v1h-1zM11 3h1v1h-1zM2 4h1v1h-1zM4 4h3v1h-3zM9 4h4v1h-4zM2 5h1v1h-1zM12 5h1v1h-1zM2 6h1v1h-1zM4 6h1v1h-1zM6 6h2v1h-2zM9 6h2v1h-2zM12 6h1v1h-1zM2 7h1v1h-1zM12 7h1v1h-1zM2 8h1v1h-1zM4 8h2v1h-2zM7 8h3v1h-3zM12 8h1v1h-1zM2 9h1v1h-1zM12 9h1v1h-1zM2 10h1v1h-1zM4 10h1v1h-1zM6 10h3v1h-3zM10 10h1v1h-1zM12 10h1v1h-1zM2 11h1v1h-1zM12 11h1v1h-1zM2 12h1v1h-1zM12 12h1v1h-1zM2 13h12v1h-12z"/><path fill="#ffffff" d="M3 2h6v1h-6zM3 3h6v1h-6zM10 3h1v1h-1zM3 4h1v1h-1zM7 4h2v1h-2zM13 4h1v1h-1zM3 5h9v1h-9zM13 5h1v1h-1zM3 6h1v1h-1zM5 6h1v1h-1zM8 6h1v1h-1zM11 6h1v1h-1zM13 6h1v1h-1zM3 7h9v1h-9zM13 7h1v1h-1zM3 8h1v1h-1zM6 8h1v1h-1zM10 8h2v1h-2zM13 8h1v1h-1zM3 9h9v1h-9zM13 9h1v1h-1zM3 10h1v1h-1zM5 10h1v1h-1zM9 10h1v1h-1zM11 10h1v1h-1zM13 10h1v1h-1zM3 11h9v1h-9zM13 11h1v1h-1zM3 12h9v1h-9zM13 12h1v1h-1zM14 13h1v1h-1zM3 14h12v1h-12z"/></svg>
<svg style="left:68px;top:45px" width="16" height="15" shape-rendering="crispEdges"><path fill="#848284" d="M2 1h8v1h-8zM2 2h1v1h-1zM9 2h2v1h-2zM2 3h1v1h-1zM9 3h1v1h-1zM11 3h1v1h-1zM2 4h1v1h-1zM4 4h3v1h-3zM9 4h4v1h-4zM2 5h1v1h-1zM9 5h3v1h-3zM2 6h1v1h-1zM4 6h1v1h-1zM6 6h2v1h-2zM12 6h1v1h-1zM2 7h1v1h-1zM9 7h3v1h-3zM2 8h1v1h-1zM4 8h2v1h-2zM8 8h6v1h-6zM2 9h1v1h-1zM8 9h6v1h-6zM2 10h1v1h-1zM4 10h1v1h-1zM6 10h8v1h-8zM2 11h1v1h-1zM8 11h6v1h-6zM2 12h1v1h-1zM8 12h6v1h-6zM2 13h12v1h-12z"/><path fill="#ffffff" d="M3 2h6v1h-6zM3 3h6v1h-6zM10 3h1v1h-1zM3 4h1v1h-1zM7 4h2v1h-2zM13 4h1v1h-1zM3 5h6v1h-6zM12 5h1v1h-1zM3 6h1v1h-1zM5 6h1v1h-1zM8 6h4v1h-4zM13 6h1v1h-1zM3 7h6v1h-6zM12 7h1v1h-1zM3 8h1v1h-1zM6 8h2v1h-2zM14 8h1v1h-1zM3 9h5v1h-5zM14 9h1v1h-1zM3 10h1v1h-1zM5 10h1v1h-1zM14 10h1v1h-1zM3 11h5v1h-5zM14 11h1v1h-1zM3 12h5v1h-5zM14 12h1v1h-1zM14 13h1v1h-1zM3 14h12v1h-12z"/></svg>
<svg style="left:97px;top:45px" width="16" height="14" shape-rendering="crispEdges"><path fill="#000000" d="M4 1h8v1h-8zM4 2h1v1h-1zM11 2h2v1h-2zM4 3h1v1h-1zM11 3h1v1h-1zM13 3h1v1h-1zM6 4h3v1h-3zM11 4h4v1h-4zM14 5h1v1h-1zM6 6h2v1h-2zM9 6h2v1h-2zM14 6h1v1h-1zM14 7h1v1h-1zM8 8h3v1h-3zM14 8h1v1h-1zM14 9h1v1h-1zM7 10h2v1h-2zM12 10h1v1h-1zM14 10h1v1h-1zM9 11h3v1h-3zM14 11h1v1h-1zM4 12h1v1h-1zM14 12h1v1h-1zM4 13h11v1h-11z"/><path fill="#0000ff" d="M2 2h1v1h-1zM1 3h2v1h-2zM1 4h1v1h-1zM4 4h1v1h-1zM1 5h1v1h-1zM4 5h1v1h-1zM1 6h5v1h-5zM1 7h6v1h-6zM2 8h6v1h-6zM3 9h4v1h-4zM4 10h2v1h-2zM4 11h1v1h-1z"/><path fill="#ffffff" d="M5 2h6v1h-6zM5 3h6v1h-6zM12 3h1v1h-1zM5 4h1v1h-1zM9 4h2v1h-2zM5 5h9v1h-9zM8 6h1v1h-1zM11 6h3v1h-3zM7 7h7v1h-7zM11 8h3v1h-3zM7 9h7v1h-7zM6 10h1v1h-1zM9 10h3v1h-3zM13 10h1v1h-1zM5 11h4v1h-4zM12 11h2v1h-2zM5 12h9v1h-9z"/></svg>
<svg style="left:120px;top:45px" width="16" height="14" shape-rendering="crispEdges"><path fill="#000000" d="M5 1h8v1h-8zM5 2h1v1h-1zM12 2h2v1h-2zM12 3h1v1h-1zM14 3h1v1h-1zM6 4h3v1h-3zM12 4h4v1h-4zM15 5h1v1h-1zM7 6h2v1h-2zM10 6h2v1h-2zM15 6h1v1h-1zM15 7h1v1h-1zM9 8h3v1h-3zM15 8h1v1h-1zM6 9h1v1h-1zM15 9h1v1h-1zM8 10h2v1h-2zM13 10h1v1h-1zM15 10h1v1h-1zM10 11h3v1h-3zM15 11h1v1h-1zM5 12h1v1h-1zM15 12h1v1h-1zM5 13h11v1h-11z"/><path fill="#ffffff" d="M6 2h6v1h-6zM6 3h6v1h-6zM13 3h1v1h-1zM9 4h3v1h-3zM6 5h9v1h-9zM6 6h1v1h-1zM9 6h1v1h-1zM12 6h3v1h-3zM7 7h8v1h-8zM7 8h2v1h-2zM12 8h3v1h-3zM7 9h8v1h-8zM5 10h3v1h-3zM10 10h3v1h-3zM14 10h1v1h-1zM5 11h5v1h-5zM13 11h2v1h-2zM6 12h9v1h-9z"/><path fill="#0000ff" d="M5 3h1v1h-1zM5 4h1v1h-1zM5 5h1v1h-1zM3 6h3v1h-3zM2 7h5v1h-5zM1 8h6v1h-6zM0 9h6v1h-6zM1 10h4v1h-4zM2 11h3v1h-3zM3 12h1v1h-1z"/></svg>
<svg style="left:143px;top:45px" width="16" height="15" shape-rendering="crispEdges"><path fill="#000000" d="M5 0h2v1h-2zM8 0h2v1h-2zM3 1h2v1h-2zM10 1h2v1h-2zM1 2h2v1h-2zM12 2h2v1h-2zM0 3h1v1h-1zM14 3h1v1h-1zM0 4h3v1h-3zM12 4h3v1h-3zM0 5h1v1h-1zM3 5h2v1h-2zM10 5h2v1h-2zM14 5h1v1h-1zM0 6h1v1h-1zM5 6h2v1h-2zM8 6h2v1h-2zM14 6h1v1h-1zM0 7h1v1h-1zM7 7h1v1h-1zM14 7h1v1h-1zM0 8h1v1h-1zM7 8h1v1h-1zM14 8h1v1h-1zM0 9h1v1h-1zM7 9h1v1h-1zM14 9h1v1h-1zM0 10h1v1h-1zM7 10h1v1h-1zM14 10h1v1h-1zM1 11h2v1h-2zM7 11h1v1h-1zM12 11h2v1h-2zM3 12h2v1h-2zM7 12h1v1h-1zM10 12h2v1h-2zM5 13h5v1h-5zM7 14h1v1h-1z"/><path fill="#ffffff" d="M7 0h1v1h-1zM5 1h5v1h-5zM3 2h2v1h-2zM7 2h1v1h-1zM10 2h2v1h-2zM1 3h5v1h-5zM7 3h1v1h-1zM9 3h5v1h-5zM3 4h1v1h-1zM6 4h3v1h-3zM11 4h1v1h-1zM1 5h2v1h-2zM5 5h5v1h-5zM12 5h2v1h-2zM1 6h2v1h-2zM4 6h1v1h-1zM7 6h1v1h-1zM11 6h3v1h-3zM1 7h2v1h-2zM4 7h3v1h-3zM8 7h2v1h-2zM11 7h3v1h-3zM1 8h2v1h-2zM4 8h3v1h-3zM8 8h2v1h-2zM11 8h3v1h-3zM1 9h2v1h-2zM4 9h3v1h-3zM8 9h2v1h-2zM11 9h3v1h-3zM1 10h2v1h-2zM4 10h3v1h-3zM8 10h2v1h-2zM11 10h3v1h-3zM4 11h3v1h-3zM8 11h2v1h-2zM11 11h1v1h-1zM5 12h2v1h-2zM8 12h2v1h-2z"/><path fill="#848284" d="M5 2h2v1h-2zM8 2h2v1h-2zM6 3h1v1h-1zM8 3h1v1h-1zM4 4h2v1h-2zM9 4h2v1h-2zM3 6h1v1h-1zM10 6h1v1h-1zM3 7h1v1h-1zM10 7h1v1h-1zM3 8h1v1h-1zM10 8h1v1h-1zM3 9h1v1h-1zM10 9h1v1h-1zM3 10h1v1h-1zM10 10h1v1h-1zM3 11h1v1h-1zM10 11h1v1h-1z"/></svg>
<svg style="left:172px;top:45px" width="16" height="13" shape-rendering="crispEdges"><path fill="#000000" d="M6 0h1v1h-1zM10 0h1v1h-1zM6 1h1v1h-1zM10 1h1v1h-1zM6 2h1v1h-1zM10 2h1v1h-1zM6 3h2v1h-2zM9 3h2v1h-2zM7 4h1v1h-1zM9 4h1v1h-1zM7 5h3v1h-3zM8 6h1v1h-1zM8 7h1v1h-1z"/><path fill="#000084" d="M5 7h2v1h-2zM10 7h2v1h-2zM4 8h1v1h-1zM7 8h3v1h-3zM12 8h1v1h-1zM4 9h1v1h-1zM7 9h1v1h-1zM9 9h1v1h-1zM12 9h1v1h-1zM4 10h1v1h-1zM7 10h1v1h-1zM9 10h1v1h-1zM12 10h1v1h-1zM4 11h1v1h-1zM7 11h1v1h-1zM9 11h1v1h-1zM12 11h1v1h-1zM5 12h2v1h-2zM10 12h2v1h-2z"/></svg>
<svg style="left:195px;top:45px" width="16" height="13" shape-rendering="crispEdges"><path fill="#000000" d="M1 1h6v1h-6zM1 2h1v1h-1zM6 2h2v1h-2zM1 3h1v1h-1zM3 3h2v1h-2zM6 3h1v1h-1zM8 3h1v1h-1zM1 4h1v1h-1zM1 5h1v1h-1zM3 5h3v1h-3zM1 6h1v1h-1zM8 6h2v1h-2zM1 7h1v1h-1zM3 7h3v1h-3zM1 8h1v1h-1zM8 8h4v1h-4zM1 9h5v1h-5zM8 10h5v1h-5z"/><path fill="#ffffff" d="M2 2h4v1h-4zM2 3h1v1h-1zM5 3h1v1h-1zM7 3h1v1h-1zM2 4h4v1h-4zM2 5h1v1h-1zM7 5h4v1h-4zM2 6h4v1h-4zM7 6h1v1h-1zM10 6h1v1h-1zM12 6h1v1h-1zM2 7h1v1h-1zM7 7h4v1h-4zM2 8h4v1h-4zM7 8h1v1h-1zM12 8h2v1h-2zM7 9h7v1h-7zM7 10h1v1h-1zM13 10h1v1h-1zM7 11h7v1h-7z"/><path fill="#000084" d="M6 4h6v1h-6zM6 5h1v1h-1zM11 5h2v1h-2zM6 6h1v1h-1zM11 6h1v1h-1zM13 6h1v1h-1zM6 7h1v1h-1zM11 7h4v1h-4zM6 8h1v1h-1zM14 8h1v1h-1zM6 9h1v1h-1zM14 9h1v1h-1zM6 10h1v1h-1zM14 10h1v1h-1zM6 11h1v1h-1zM14 11h1v1h-1zM6 12h9v1h-9z"/></svg>
<svg style="left:218px;top:45px" width="16" height="13" shape-rendering="crispEdges"><path fill="#000000" d="M5 0h5v1h-5zM1 1h4v1h-4zM10 1h4v1h-4zM0 2h1v1h-1zM3 2h2v1h-2zM10 2h2v1h-2zM14 2h1v1h-1zM0 3h1v1h-1zM4 3h7v1h-7zM14 3h1v1h-1zM0 4h1v1h-1zM14 4h1v1h-1zM0 5h1v1h-1zM14 5h1v1h-1zM0 6h1v1h-1zM0 7h1v1h-1zM0 8h1v1h-1zM0 9h1v1h-1zM0 10h1v1h-1zM0 11h1v1h-1zM1 12h5v1h-5z"/><path fill="#ffff00" d="M5 1h5v1h-5zM5 2h5v1h-5z"/><path fill="#847d52" d="M1 2h2v1h-2zM12 2h2v1h-2zM1 3h3v1h-3zM11 3h3v1h-3zM1 4h13v1h-13zM1 5h13v1h-13zM1 6h5v1h-5zM1 7h5v1h-5zM1 8h5v1h-5zM1 9h5v1h-5zM1 10h5v1h-5zM1 11h5v1h-5z"/><path fill="#000084" d="M6 6h9v1h-9zM6 7h1v1h-1zM14 7h2v1h-2zM6 8h1v1h-1zM8 8h4v1h-4zM15 8h1v1h-1zM6 9h1v1h-1zM15 9h1v1h-1zM6 10h1v1h-1zM8 10h6v1h-6zM15 10h1v1h-1zM6 11h1v1h-1zM15 11h1v1h-1zM6 12h10v1h-10z"/><path fill="#ffffff" d="M7 7h7v1h-7zM7 8h1v1h-1zM12 8h3v1h-3zM7 9h8v1h-8zM7 10h1v1h-1zM14 10h1v1h-1zM7 11h8v1h-8z"/></svg>
<svg style="left:247px;top:45px" width="16" height="14" shape-rendering="crispEdges"><path fill="#000000" d="M1 1h2v1h-2zM12 1h2v1h-2zM1 2h3v1h-3zM11 2h2v1h-2zM2 3h3v1h-3zM10 3h2v1h-2zM3 4h3v1h-3zM9 4h2v1h-2zM4 5h3v1h-3zM8 5h2v1h-2zM5 6h4v1h-4zM5 7h4v1h-4zM4 8h2v1h-2zM8 8h2v1h-2zM3 9h2v1h-2zM9 9h2v1h-2zM2 10h3v1h-3zM10 10h2v1h-2zM1 11h3v1h-3zM11 11h1v1h-1zM1 12h2v1h-2zM12 12h1v1h-1zM13 13h1v1h-1z"/></svg>
<svg style="left:276px;top:45px" width="16" height="14" shape-rendering="crispEdges"><path fill="#0000ff" d="M2 0h1v1h-1zM2 1h1v1h-1zM2 2h1v1h-1zM2 3h1v1h-1zM2 4h1v1h-1zM2 5h1v1h-1zM2 6h1v1h-1zM2 7h1v1h-1zM2 8h1v1h-1zM2 9h1v1h-1zM2 10h1v1h-1zM0 11h5v1h-5zM1 12h3v1h-3zM2 13h1v1h-1z"/><path fill="#000000" d="M4 2h9v1h-9zM7 4h7v1h-7zM7 6h7v1h-7zM4 9h9v1h-9zM7 11h7v1h-7zM7 13h7v1h-7z"/><path fill="#848284" d="M6 4h1v1h-1zM6 6h1v1h-1zM6 11h1v1h-1zM6 13h1v1h-1z"/></svg>
<svg style="left:299px;top:45px" width="16" height="15" shape-rendering="crispEdges"><path fill="#0000ff" d="M0 0h4v1h-4zM12 0h4v1h-4zM0 1h3v1h-3zM13 1h3v1h-3zM0 2h2v1h-2zM3 2h1v1h-1zM12 2h1v1h-1zM14 2h2v1h-2zM0 3h1v1h-1zM4 3h1v1h-1zM11 3h1v1h-1zM15 3h1v1h-1zM5 4h1v1h-1zM10 4h1v1h-1zM7 5h2v1h-2zM6 6h4v1h-4zM5 7h6v1h-6zM6 8h4v1h-4zM7 9h2v1h-2zM5 10h1v1h-1zM10 10h1v1h-1zM0 11h1v1h-1zM4 11h1v1h-1zM11 11h1v1h-1zM15 11h1v1h-1zM0 12h2v1h-2zM3 12h1v1h-1zM12 12h1v1h-1zM14 12h2v1h-2zM0 13h3v1h-3zM13 13h3v1h-3zM0 14h4v1h-4zM12 14h4v1h-4z"/></svg>
<svg style="left:322px;top:45px" width="16" height="15" shape-rendering="crispEdges"><path fill="#0000ff" d="M0 0h1v1h-1zM15 0h1v1h-1zM1 1h1v1h-1zM14 1h1v1h-1zM2 2h1v1h-1zM5 2h1v1h-1zM10 2h1v1h-1zM13 2h1v1h-1zM3 3h3v1h-3zM10 3h3v1h-3zM3 4h3v1h-3zM10 4h3v1h-3zM2 5h4v1h-4zM10 5h4v1h-4zM7 6h2v1h-2zM6 7h4v1h-4zM6 8h4v1h-4zM2 9h4v1h-4zM7 9h2v1h-2zM10 9h4v1h-4zM3 10h3v1h-3zM10 10h3v1h-3zM3 11h3v1h-3zM10 11h3v1h-3zM2 12h1v1h-1zM5 12h1v1h-1zM10 12h1v1h-1zM13 12h1v1h-1zM1 13h1v1h-1zM14 13h1v1h-1zM0 14h1v1h-1zM15 14h1v1h-1z"/></svg>
<svg style="left:351px;top:45px" width="16" height="14" shape-rendering="crispEdges"><path fill="#848284" d="M4 1h1v1h-1zM7 1h1v1h-1zM10 1h1v1h-1zM5 2h6v1h-6zM4 3h2v1h-2zM8 3h2v1h-2zM11 3h1v1h-1zM3 4h3v1h-3zM8 4h1v1h-1zM11 4h2v1h-2zM2 5h3v1h-3zM7 5h2v1h-2zM11 5h1v1h-1zM1 6h4v1h-4zM7 6h4v1h-4zM12 6h1v1h-1zM0 7h4v1h-4zM6 7h2v1h-2zM9 7h1v1h-1zM12 7h1v1h-1zM2 8h2v1h-2zM6 8h2v1h-2zM10 8h1v1h-1zM3 9h2v1h-2zM7 9h2v1h-2zM4 10h1v1h-1zM7 10h1v1h-1zM4 11h1v1h-1zM5 12h1v1h-1z"/><path fill="#ffffff" d="M6 3h2v1h-2zM10 3h1v1h-1zM6 4h2v1h-2zM9 4h2v1h-2zM5 5h2v1h-2zM9 5h2v1h-2zM12 5h1v1h-1zM5 6h2v1h-2zM11 6h1v1h-1zM13 6h1v1h-1zM4 7h2v1h-2zM8 7h1v1h-1zM10 7h2v1h-2zM4 8h2v1h-2zM8 8h2v1h-2zM11 8h2v1h-2zM5 9h2v1h-2zM9 9h3v1h-3zM5 10h2v1h-2zM8 10h2v1h-2zM11 10h1v1h-1zM5 11h1v1h-1zM7 11h1v1h-1zM10 11h1v1h-1zM7 12h1v1h-1zM9 12h1v1h-1zM7 13h1v1h-1z"/></svg>
<svg style="left:380px;top:45px" width="16" height="13" shape-rendering="crispEdges"><path fill="#848284" d="M0 0h8v1h-8zM0 1h1v1h-1zM7 1h1v1h-1zM0 2h1v1h-1zM7 2h1v1h-1zM0 3h1v1h-1zM6 3h7v1h-7zM0 4h1v1h-1zM5 4h1v1h-1zM13 4h1v1h-1zM0 5h1v1h-1zM5 5h1v1h-1zM13 5h1v1h-1zM5 6h1v1h-1zM13 6h1v1h-1zM0 7h1v1h-1zM5 7h1v1h-1zM13 7h1v1h-1zM0 8h1v1h-1zM5 8h1v1h-1zM13 8h1v1h-1zM6 10h1v1h-1zM6 11h1v1h-1z"/><path fill="#ffffff" d="M1 1h6v1h-6zM1 2h1v1h-1zM6 2h1v1h-1zM1 3h1v1h-1zM1 4h1v1h-1zM6 4h7v1h-7zM1 5h4v1h-4zM6 5h1v1h-1zM12 5h1v1h-1zM6 6h1v1h-1zM12 6h1v1h-1zM1 7h4v1h-4zM6 7h1v1h-1zM12 7h1v1h-1zM1 8h1v1h-1zM3 8h2v1h-2zM6 8h7v1h-7zM7 10h8v1h-8zM7 11h1v1h-1zM9 11h6v1h-6z"/><path fill="#000000" d="M8 1h1v1h-1zM8 2h1v1h-1zM14 4h1v1h-1zM14 5h1v1h-1zM0 6h5v1h-5zM14 6h1v1h-1zM14 7h1v1h-1zM14 8h1v1h-1zM0 9h15v1h-15zM15 10h1v1h-1zM15 11h1v1h-1zM6 12h10v1h-10z"/><path fill="#0000ff" d="M2 2h4v1h-4zM2 3h1v1h-1zM4 3h2v1h-2zM2 4h3v1h-3z"/><path fill="#00ffff" d="M3 3h1v1h-1zM8 6h1v1h-1z"/><path fill="#000084" d="M7 5h5v1h-5zM7 6h1v1h-1zM11 6h1v1h-1zM7 7h1v1h-1z"/><path fill="#008284" d="M9 6h2v1h-2zM8 7h4v1h-4z"/><path fill="#00ff00" d="M2 8h1v1h-1zM8 11h1v1h-1z"/></svg>
<svg style="left:403px;top:45px" width="16" height="15" shape-rendering="crispEdges"><path fill="#848284" d="M3 1h8v1h-8zM3 2h1v1h-1zM5 2h4v1h-4zM10 2h1v1h-1zM3 3h1v1h-1zM5 3h4v1h-4zM10 3h1v1h-1zM3 4h1v1h-1zM5 4h4v1h-4zM10 4h1v1h-1zM3 5h1v1h-1zM10 5h1v1h-1zM3 6h8v1h-8zM3 7h1v1h-1zM10 7h1v1h-1zM3 8h8v1h-8zM4 9h2v1h-2zM7 9h3v1h-3zM6 10h3v1h-3zM6 11h3v1h-3zM5 12h5v1h-5zM0 13h16v1h-16z"/><path fill="#ffffff" d="M4 2h1v1h-1zM9 2h1v1h-1zM11 2h1v1h-1zM4 3h1v1h-1zM9 3h1v1h-1zM11 3h1v1h-1zM4 4h1v1h-1zM9 4h1v1h-1zM11 4h1v1h-1zM4 5h6v1h-6zM11 5h1v1h-1zM11 6h1v1h-1zM4 7h6v1h-6zM11 7h1v1h-1zM11 8h1v1h-1zM6 9h1v1h-1zM10 9h1v1h-1zM0 14h16v1h-16z"/></svg>
<svg style="left:426px;top:45px" width="16" height="14" shape-rendering="crispEdges"><path fill="#424142" d="M2 0h11v1h-11z"/><path fill="#848284" d="M1 1h1v1h-1zM1 2h1v1h-1zM1 3h1v1h-1zM1 4h1v1h-1zM1 5h1v1h-1zM1 6h1v1h-1zM1 7h1v1h-1zM1 8h1v1h-1zM0 10h1v1h-1zM0 11h1v1h-1zM0 12h1v1h-1z"/><path fill="#c6c3c6" d="M2 1h11v1h-11zM2 2h1v1h-1zM11 2h2v1h-2zM2 3h1v1h-1zM11 3h2v1h-2zM2 4h1v1h-1zM11 4h2v1h-2zM2 5h1v1h-1zM11 5h2v1h-2zM2 6h1v1h-1zM11 6h2v1h-2zM2 7h1v1h-1zM11 7h2v1h-2zM2 8h11v1h-11zM1 10h14v1h-14zM1 11h1v1h-1zM4 11h4v1h-4zM13 11h2v1h-2zM1 12h14v1h-14z"/><path fill="#000000" d="M13 1h1v1h-1zM13 2h1v1h-1zM13 3h1v1h-1zM13 4h1v1h-1zM13 5h1v1h-1zM13 6h1v1h-1zM13 7h1v1h-1zM13 8h1v1h-1zM1 9h13v1h-13zM15 10h1v1h-1zM8 11h5v1h-5zM15 11h1v1h-1zM15 12h1v1h-1zM1 13h15v1h-15z"/><path fill="#ffffff" d="M3 2h8v1h-8zM3 3h1v1h-1zM3 4h1v1h-1zM3 5h1v1h-1zM3 6h1v1h-1zM3 7h8v1h-8z"/><path fill="#0000ff" d="M4 3h7v1h-7zM5 4h6v1h-6zM4 5h7v1h-7zM4 6h7v1h-7z"/><path fill="#00ffff" d="M4 4h1v1h-1z"/><path fill="#00ff00" d="M2 11h2v1h-2z"/></svg>
<svg style="left:449px;top:45px" width="16" height="13" shape-rendering="crispEdges"><path fill="#848284" d="M2 1h8v1h-8zM2 2h1v1h-1zM9 2h1v1h-1zM12 2h1v1h-1zM2 3h1v1h-1zM4 3h4v1h-4zM9 3h1v1h-1zM11 3h2v1h-2zM2 4h1v1h-1zM4 4h4v1h-4zM9 4h6v1h-6zM2 5h1v1h-1zM4 5h4v1h-4zM9 5h1v1h-1zM11 5h2v1h-2zM2 6h1v1h-1zM9 6h1v1h-1zM12 6h1v1h-1zM2 7h8v1h-8zM2 8h1v1h-1zM9 8h1v1h-1zM12 8h1v1h-1zM2 9h1v1h-1zM4 9h3v1h-3zM9 9h1v1h-1zM11 9h3v1h-3zM2 10h13v1h-13zM12 11h2v1h-2zM12 12h1v1h-1z"/><path fill="#ffffff" d="M3 2h6v1h-6zM10 2h1v1h-1zM3 3h1v1h-1zM8 3h1v1h-1zM10 3h1v1h-1zM3 4h1v1h-1zM8 4h1v1h-1zM3 5h1v1h-1zM8 5h1v1h-1zM10 5h1v1h-1zM14 5h1v1h-1zM3 6h6v1h-6zM10 6h1v1h-1zM14 6h1v1h-1zM10 7h1v1h-1zM3 8h6v1h-6zM10 8h1v1h-1zM3 9h1v1h-1zM7 9h2v1h-2zM10 9h1v1h-1zM3 11h8v1h-8zM15 11h1v1h-1zM14 12h1v1h-1z"/></svg>
<svg style="left:478px;top:45px" width="16" height="14" shape-rendering="crispEdges"><path fill="#848284" d="M2 1h2v1h-2zM5 1h4v1h-4zM2 2h1v1h-1zM4 2h2v1h-2zM8 2h3v1h-3zM2 3h1v1h-1zM4 3h1v1h-1zM6 3h6v1h-6zM3 4h2v1h-2zM6 4h2v1h-2zM9 4h5v1h-5zM2 5h3v1h-3zM6 5h1v1h-1zM8 5h5v1h-5zM2 6h2v1h-2zM5 6h1v1h-1zM7 6h6v1h-6zM14 6h1v1h-1zM1 7h3v1h-3zM5 7h8v1h-8zM14 7h1v1h-1zM1 8h2v1h-2zM4 8h1v1h-1zM6 8h8v1h-8zM3 9h11v1h-11zM1 10h2v1h-2zM4 10h8v1h-8zM2 11h1v1h-1zM4 11h7v1h-7zM5 12h4v1h-4z"/><path fill="#ffffff" d="M3 2h1v1h-1zM6 2h2v1h-2zM3 3h1v1h-1zM5 3h1v1h-1zM5 4h1v1h-1zM8 4h1v1h-1zM5 5h1v1h-1zM7 5h1v1h-1zM13 5h2v1h-2zM4 6h1v1h-1zM6 6h1v1h-1zM13 6h1v1h-1zM4 7h1v1h-1zM13 7h1v1h-1zM15 7h1v1h-1zM3 8h1v1h-1zM5 8h1v1h-1zM14 8h1v1h-1zM2 9h1v1h-1zM14 9h1v1h-1zM12 10h3v1h-3zM11 11h2v1h-2zM2 12h1v1h-1zM9 12h2v1h-2zM5 13h4v1h-4z"/></svg>
<svg style="left:507px;top:45px" width="16" height="14" shape-rendering="crispEdges"><path fill="#848284" d="M0 1h15v1h-15zM0 2h1v1h-1zM2 2h3v1h-3zM11 2h2v1h-2zM14 2h1v1h-1zM0 3h15v1h-15zM0 4h1v1h-1zM2 4h1v1h-1zM4 4h1v1h-1zM6 4h1v1h-1zM8 4h1v1h-1zM10 4h1v1h-1zM12 4h1v1h-1zM14 4h1v1h-1zM0 5h15v1h-15zM0 6h1v1h-1zM2 6h1v1h-1zM4 6h1v1h-1zM6 6h1v1h-1zM8 6h1v1h-1zM10 6h1v1h-1zM12 6h1v1h-1zM14 6h1v1h-1zM0 7h15v1h-15zM0 8h1v1h-1zM14 8h1v1h-1zM0 9h1v1h-1zM2 9h1v1h-1zM4 9h1v1h-1zM6 9h1v1h-1zM8 9h1v1h-1zM10 9h1v1h-1zM12 9h1v1h-1zM14 9h1v1h-1zM0 10h15v1h-15zM0 11h1v1h-1zM2 11h1v1h-1zM4 11h1v1h-1zM6 11h1v1h-1zM8 11h1v1h-1zM10 11h1v1h-1zM12 11h1v1h-1zM14 11h1v1h-1zM0 12h15v1h-15z"/><path fill="#ffffff" d="M1 2h1v1h-1zM5 2h6v1h-6zM13 2h1v1h-1zM15 2h1v1h-1zM15 3h1v1h-1zM1 4h1v1h-1zM3 4h1v1h-1zM5 4h1v1h-1zM7 4h1v1h-1zM9 4h1v1h-1zM11 4h1v1h-1zM13 4h1v1h-1zM15 4h1v1h-1zM15 5h1v1h-1zM1 6h1v1h-1zM3 6h1v1h-1zM5 6h1v1h-1zM7 6h1v1h-1zM9 6h1v1h-1zM11 6h1v1h-1zM13 6h1v1h-1zM15 6h1v1h-1zM15 7h1v1h-1zM1 8h13v1h-13zM15 8h1v1h-1zM1 9h1v1h-1zM3 9h1v1h-1zM5 9h1v1h-1zM7 9h1v1h-1zM9 9h1v1h-1zM11 9h1v1h-1zM13 9h1v1h-1zM15 9h1v1h-1zM15 10h1v1h-1zM1 11h1v1h-1zM3 11h1v1h-1zM5 11h1v1h-1zM7 11h1v1h-1zM9 11h1v1h-1zM11 11h1v1h-1zM13 11h1v1h-1zM15 11h1v1h-1zM15 12h1v1h-1zM1 13h15v1h-15z"/></svg>
<svg style="left:536px;top:45px" width="16" height="15" shape-rendering="crispEdges"><path fill="#000000" d="M4 1h6v1h-6zM3 2h1v1h-1zM10 2h1v1h-1zM2 3h1v1h-1zM5 3h3v1h-3zM11 3h1v1h-1zM2 4h1v1h-1zM5 4h1v1h-1zM7 4h2v1h-2zM11 4h1v1h-1zM2 5h4v1h-4zM8 5h1v1h-1zM11 5h1v1h-1zM7 6h1v1h-1zM10 6h1v1h-1zM6 7h1v1h-1zM9 7h1v1h-1zM6 8h1v1h-1zM8 8h1v1h-1zM6 9h1v1h-1zM8 9h1v1h-1zM7 10h1v1h-1zM6 11h3v1h-3zM5 12h1v1h-1zM9 12h1v1h-1zM5 13h1v1h-1zM9 13h1v1h-1zM6 14h3v1h-3z"/><path fill="#ffff00" d="M4 2h6v1h-6zM3 3h2v1h-2zM8 3h3v1h-3zM3 4h2v1h-2zM9 4h2v1h-2zM9 5h2v1h-2zM8 6h2v1h-2zM7 7h2v1h-2zM7 8h1v1h-1zM7 9h1v1h-1zM6 12h3v1h-3zM6 13h3v1h-3z"/></svg>
<svg style="left:559px;top:45px" width="16" height="14" shape-rendering="crispEdges"><path fill="#000000" d="M0 0h16v1h-16zM0 1h1v1h-1zM15 1h1v1h-1zM0 2h1v1h-1zM2 2h7v1h-7zM15 2h1v1h-1zM0 3h1v1h-1zM10 3h3v1h-3zM15 3h1v1h-1zM0 4h1v1h-1zM2 4h4v1h-4zM9 4h2v1h-2zM12 4h1v1h-1zM15 4h1v1h-1zM0 5h1v1h-1zM5 5h7v1h-7zM14 5h1v1h-1zM0 6h1v1h-1zM2 6h9v1h-9zM13 6h2v1h-2zM0 7h1v1h-1zM12 7h1v1h-1zM15 7h1v1h-1zM0 8h1v1h-1zM2 8h8v1h-8zM12 8h2v1h-2zM15 8h1v1h-1zM0 9h1v1h-1zM12 9h1v1h-1zM15 9h1v1h-1zM0 10h1v1h-1zM3 10h9v1h-9zM15 10h1v1h-1zM0 11h1v1h-1zM12 11h1v1h-1zM15 11h1v1h-1zM0 12h1v1h-1zM6 12h1v1h-1zM9 12h1v1h-1zM12 12h1v1h-1zM15 12h1v1h-1zM0 13h16v1h-16z"/><path fill="#ffffff" d="M1 1h9v1h-9zM1 2h1v1h-1zM1 3h7v1h-7zM1 4h1v1h-1zM6 4h3v1h-3zM1 5h4v1h-4zM1 6h1v1h-1zM1 7h9v1h-9zM13 7h2v1h-2zM1 8h1v1h-1zM14 8h1v1h-1zM1 9h9v1h-9zM13 9h2v1h-2zM1 10h2v1h-2zM12 10h3v1h-3zM1 11h9v1h-9zM13 11h2v1h-2zM1 12h5v1h-5zM7 12h2v1h-2zM13 12h2v1h-2z"/><path fill="#ffff00" d="M10 1h5v1h-5zM9 2h6v1h-6zM8 3h2v1h-2zM13 3h2v1h-2zM13 4h2v1h-2zM12 5h2v1h-2zM11 6h2v1h-2zM10 7h2v1h-2zM10 8h2v1h-2zM10 9h2v1h-2zM10 11h2v1h-2zM10 12h2v1h-2z"/></svg>
<svg style="left:16px;top:69px" width="16" height="15" shape-rendering="crispEdges"><path fill="#ff0000" d="M4 0h4v1h-4zM4 1h4v1h-4zM4 2h4v1h-4zM7 3h1v1h-1zM7 4h1v1h-1zM7 5h1v1h-1zM7 6h1v1h-1zM7 7h1v1h-1z"/><path fill="#000000" d="M13 3h1v1h-1zM0 4h7v1h-7zM8 4h1v1h-1zM12 4h2v1h-2zM0 5h1v1h-1zM8 5h1v1h-1zM11 5h5v1h-5zM0 6h1v1h-1zM8 6h1v1h-1zM10 6h6v1h-6zM0 7h1v1h-1zM8 7h1v1h-1zM11 7h5v1h-5zM0 8h1v1h-1zM8 8h1v1h-1zM12 8h2v1h-2zM0 9h10v1h-10zM13 9h1v1h-1zM3 10h1v1h-1zM5 10h1v1h-1zM7 10h1v1h-1zM10 10h1v1h-1zM3 11h1v1h-1zM5 11h1v1h-1zM8 11h1v1h-1zM11 11h1v1h-1zM3 12h1v1h-1zM5 12h1v1h-1zM9 12h1v1h-1zM12 12h1v1h-1zM3 13h1v1h-1zM5 13h1v1h-1zM10 13h2v1h-2zM3 14h1v1h-1zM5 14h1v1h-1z"/><path fill="#848284" d="M1 5h6v1h-6zM1 6h6v1h-6zM1 7h6v1h-6zM1 8h7v1h-7zM4 10h1v1h-1zM8 10h2v1h-2zM4 11h1v1h-1zM9 11h2v1h-2zM4 12h1v1h-1zM10 12h2v1h-2zM4 13h1v1h-1z"/></svg>
<svg style="left:45px;top:69px" width="16" height="14" shape-rendering="crispEdges"><path fill="#0000ff" d="M7 0h2v1h-2zM7 1h2v1h-2zM7 2h2v1h-2zM7 3h2v1h-2zM7 4h2v1h-2zM7 5h2v1h-2zM7 6h2v1h-2zM7 7h2v1h-2zM5 8h6v1h-6zM6 9h4v1h-4zM7 10h2v1h-2z"/><path fill="#000000" d="M6 2h1v1h-1zM9 2h1v1h-1zM4 3h2v1h-2zM10 3h2v1h-2zM3 4h1v1h-1zM12 4h1v1h-1zM3 5h3v1h-3zM10 5h3v1h-3zM3 6h1v1h-1zM6 6h1v1h-1zM9 6h1v1h-1zM12 6h1v1h-1zM3 7h1v1h-1zM12 7h1v1h-1zM3 8h1v1h-1zM12 8h1v1h-1zM3 9h1v1h-1zM12 9h1v1h-1zM3 10h1v1h-1zM12 10h1v1h-1zM3 11h1v1h-1zM12 11h1v1h-1zM4 12h2v1h-2zM10 12h2v1h-2zM6 13h4v1h-4z"/><path fill="#00ff00" d="M6 3h1v1h-1zM9 3h1v1h-1zM4 4h3v1h-3zM9 4h3v1h-3zM6 5h1v1h-1zM9 5h1v1h-1zM4 6h2v1h-2zM10 6h2v1h-2zM4 7h3v1h-3zM9 7h3v1h-3zM4 8h1v1h-1zM11 8h1v1h-1zM4 9h2v1h-2zM10 9h2v1h-2zM4 10h3v1h-3zM9 10h3v1h-3zM4 11h8v1h-8zM6 12h4v1h-4z"/></svg>
<svg style="left:68px;top:69px" width="16" height="15" shape-rendering="crispEdges"><path fill="#000000" d="M6 1h4v1h-4zM4 2h2v1h-2zM10 2h2v1h-2zM3 3h1v1h-1zM12 3h1v1h-1zM3 4h2v1h-2zM11 4h2v1h-2zM3 5h1v1h-1zM5 5h6v1h-6zM12 5h1v1h-1zM3 6h1v1h-1zM12 6h1v1h-1zM3 7h1v1h-1zM12 7h1v1h-1zM3 8h1v1h-1zM12 8h1v1h-1zM3 9h1v1h-1zM12 9h1v1h-1zM3 10h1v1h-1zM12 10h1v1h-1zM3 11h1v1h-1zM12 11h1v1h-1zM4 12h2v1h-2zM10 12h2v1h-2zM6 13h1v1h-1zM9 13h1v1h-1z"/><path fill="#00ff00" d="M6 2h4v1h-4zM4 3h8v1h-8zM5 4h6v1h-6zM4 5h1v1h-1zM11 5h1v1h-1zM4 6h2v1h-2zM10 6h2v1h-2zM4 7h1v1h-1zM7 7h2v1h-2zM11 7h1v1h-1zM4 8h5v1h-5zM11 8h1v1h-1zM4 9h4v1h-4zM10 9h2v1h-2zM4 10h3v1h-3zM9 10h3v1h-3zM4 11h3v1h-3zM9 11h3v1h-3zM6 12h4v1h-4z"/><path fill="#0000ff" d="M6 6h4v1h-4zM5 7h2v1h-2zM9 7h2v1h-2zM9 8h2v1h-2zM8 9h2v1h-2zM7 10h2v1h-2zM7 11h2v1h-2zM7 13h2v1h-2zM7 14h2v1h-2z"/></svg>
<svg style="left:91px;top:69px" width="16" height="15" shape-rendering="crispEdges"><path fill="#0000ff" d="M10 0h3v1h-3zM10 1h1v1h-1zM13 1h1v1h-1zM9 2h1v1h-1zM13 2h1v1h-1zM9 3h1v1h-1zM13 3h1v1h-1zM9 4h1v1h-1zM13 4h2v1h-2zM9 5h1v1h-1zM13 5h3v1h-3zM9 6h1v1h-1zM13 6h2v1h-2zM9 7h1v1h-1zM13 7h1v1h-1zM9 8h1v1h-1zM9 9h1v1h-1zM13 9h1v1h-1zM9 10h1v1h-1zM13 10h1v1h-1zM9 11h1v1h-1zM13 11h1v1h-1zM9 12h1v1h-1zM13 12h1v1h-1zM10 13h1v1h-1zM12 13h1v1h-1zM10 14h2v1h-2z"/><path fill="#000000" d="M6 1h4v1h-4zM4 2h2v1h-2zM10 2h2v1h-2zM3 3h1v1h-1zM12 3h1v1h-1zM3 4h2v1h-2zM11 4h2v1h-2zM3 5h1v1h-1zM5 5h4v1h-4zM10 5h1v1h-1zM12 5h1v1h-1zM3 6h1v1h-1zM12 6h1v1h-1zM3 7h1v1h-1zM12 7h1v1h-1zM3 8h1v1h-1zM12 8h1v1h-1zM3 9h1v1h-1zM12 9h1v1h-1zM3 10h1v1h-1zM12 10h1v1h-1zM3 11h1v1h-1zM12 11h1v1h-1zM4 12h2v1h-2zM10 12h2v1h-2zM6 13h4v1h-4z"/><path fill="#00ff00" d="M6 2h3v1h-3zM4 3h5v1h-5zM10 3h2v1h-2zM5 4h4v1h-4zM10 4h1v1h-1zM4 5h1v1h-1zM11 5h1v1h-1zM4 6h5v1h-5zM10 6h2v1h-2zM4 7h5v1h-5zM10 7h2v1h-2zM4 8h5v1h-5zM10 8h2v1h-2zM4 9h5v1h-5zM10 9h2v1h-2zM4 10h5v1h-5zM10 10h2v1h-2zM4 11h5v1h-5zM10 11h2v1h-2zM6 12h3v1h-3z"/></svg>
<svg style="left:120px;top:69px" width="16" height="13" shape-rendering="crispEdges"><path fill="#000000" d="M2 1h5v1h-5zM9 1h5v1h-5zM1 2h2v1h-2zM7 2h2v1h-2zM13 2h3v1h-3zM0 3h1v1h-1zM2 3h1v1h-1zM4 3h2v1h-2zM7 3h1v1h-1zM13 3h1v1h-1zM15 3h1v1h-1zM0 4h1v1h-1zM2 4h1v1h-1zM7 4h1v1h-1zM10 4h2v1h-2zM13 4h3v1h-3zM0 5h1v1h-1zM2 5h1v1h-1zM4 5h2v1h-2zM7 5h1v1h-1zM13 5h1v1h-1zM15 5h1v1h-1zM0 6h1v1h-1zM2 6h1v1h-1zM7 6h1v1h-1zM10 6h2v1h-2zM13 6h3v1h-3zM0 7h1v1h-1zM2 7h1v1h-1zM7 7h1v1h-1zM13 7h1v1h-1zM15 7h1v1h-1zM0 8h1v1h-1zM2 8h1v1h-1zM4 8h2v1h-2zM7 8h1v1h-1zM13 8h3v1h-3zM0 9h1v1h-1zM2 9h1v1h-1zM7 9h1v1h-1zM13 9h1v1h-1zM15 9h1v1h-1zM0 10h1v1h-1zM2 10h14v1h-14zM0 11h1v1h-1zM6 11h3v1h-3zM14 11h2v1h-2zM0 12h15v1h-15z"/><path fill="#ffffff" d="M3 2h4v1h-4zM9 2h4v1h-4zM1 3h1v1h-1zM3 3h1v1h-1zM6 3h1v1h-1zM8 3h5v1h-5zM1 4h1v1h-1zM3 4h4v1h-4zM8 4h2v1h-2zM12 4h1v1h-1zM1 5h1v1h-1zM3 5h1v1h-1zM6 5h1v1h-1zM8 5h5v1h-5zM14 5h1v1h-1zM1 6h1v1h-1zM3 6h4v1h-4zM8 6h2v1h-2zM12 6h1v1h-1zM1 7h1v1h-1zM3 7h4v1h-4zM8 7h5v1h-5zM1 8h1v1h-1zM3 8h1v1h-1zM6 8h1v1h-1zM8 8h5v1h-5zM1 9h1v1h-1zM3 9h4v1h-4zM8 9h5v1h-5zM1 10h1v1h-1zM1 11h5v1h-5zM9 11h5v1h-5z"/><path fill="#ff0000" d="M14 3h1v1h-1z"/><path fill="#ffff00" d="M14 7h1v1h-1z"/><path fill="#00ffff" d="M14 9h1v1h-1z"/></svg>
<svg style="left:143px;top:69px" width="16" height="14" shape-rendering="crispEdges"><path fill="#848200" d="M4 1h4v1h-4zM3 2h1v1h-1zM6 2h2v1h-2zM3 3h1v1h-1zM6 3h2v1h-2zM3 4h1v1h-1zM7 4h1v1h-1zM9 9h3v1h-3z"/><path fill="#ffffff" d="M4 2h2v1h-2zM4 3h2v1h-2zM4 4h1v1h-1zM5 6h1v1h-1zM5 7h1v1h-1zM6 8h1v1h-1zM6 9h2v1h-2zM7 10h1v1h-1zM8 11h2v1h-2zM9 12h1v1h-1z"/><path fill="#000000" d="M8 2h1v1h-1zM8 3h1v1h-1zM5 4h2v1h-2zM8 4h1v1h-1zM3 5h1v1h-1zM5 5h1v1h-1zM7 5h2v1h-2zM3 6h1v1h-1zM6 6h1v1h-1zM6 7h2v1h-2zM4 8h1v1h-1zM7 8h1v1h-1zM10 8h1v1h-1zM4 9h1v1h-1zM8 9h1v1h-1zM12 9h1v1h-1zM5 10h1v1h-1zM8 10h2v1h-2zM12 10h1v1h-1zM6 11h1v1h-1zM10 11h1v1h-1zM12 11h1v1h-1zM7 12h1v1h-1zM10 12h3v1h-3zM8 13h4v1h-4z"/><path fill="#ffff00" d="M4 5h1v1h-1zM4 6h1v1h-1zM4 7h1v1h-1zM5 8h1v1h-1zM5 9h1v1h-1zM6 10h1v1h-1zM10 10h2v1h-2zM7 11h1v1h-1zM11 11h1v1h-1zM8 12h1v1h-1z"/></svg>
<svg style="left:166px;top:69px" width="16" height="14" shape-rendering="crispEdges"><path fill="#000000" d="M2 1h2v1h-2zM12 1h2v1h-2zM1 2h3v1h-3zM12 2h3v1h-3zM1 3h2v1h-2zM13 3h2v1h-2zM0 4h2v1h-2zM14 4h2v1h-2zM0 5h2v1h-2zM15 5h1v1h-1zM0 6h2v1h-2zM15 6h1v1h-1zM0 7h2v1h-2zM14 7h2v1h-2zM0 8h2v1h-2zM14 8h2v1h-2zM0 9h2v1h-2zM14 9h2v1h-2zM0 10h2v1h-2zM14 10h2v1h-2zM1 11h2v1h-2zM13 11h2v1h-2zM1 12h3v1h-3zM12 12h3v1h-3zM2 13h2v1h-2zM12 13h2v1h-2z"/><path fill="#ff0000" d="M5 4h2v1h-2zM6 5h2v1h-2zM7 6h2v1h-2zM8 7h2v1h-2zM9 8h2v1h-2zM10 9h2v1h-2zM11 10h1v1h-1z"/><path fill="#008200" d="M8 5h6v1h-6zM9 6h5v1h-5zM2 7h5v1h-5zM2 8h6v1h-6z"/></svg>
<svg style="left:189px;top:69px" width="16" height="15" shape-rendering="crispEdges"><path fill="#0000ff" d="M0 0h5v1h-5zM0 1h4v1h-4zM0 2h5v1h-5zM0 3h2v1h-2zM4 3h2v1h-2zM0 4h1v1h-1zM5 4h2v1h-2zM6 5h1v1h-1z"/><path fill="#848284" d="M11 3h1v1h-1zM9 8h6v1h-6zM9 9h5v1h-5zM8 10h6v1h-6zM8 11h4v1h-4zM8 12h4v1h-4zM8 13h2v1h-2z"/><path fill="#848200" d="M8 4h1v1h-1zM7 5h2v1h-2zM3 6h2v1h-2zM6 6h3v1h-3zM2 7h2v1h-2zM5 7h1v1h-1zM7 7h4v1h-4zM1 8h2v1h-2zM4 8h1v1h-1zM6 8h1v1h-1zM8 8h1v1h-1zM1 9h1v1h-1zM3 9h1v1h-1zM5 9h1v1h-1zM7 9h2v1h-2zM1 10h1v1h-1zM3 10h1v1h-1zM5 10h3v1h-3zM1 11h1v1h-1zM3 11h3v1h-3zM7 11h1v1h-1zM2 12h6v1h-6zM4 13h4v1h-4z"/><path fill="#ffffff" d="M9 4h5v1h-5zM9 5h5v1h-5zM5 6h1v1h-1zM9 6h4v1h-4zM4 7h1v1h-1zM6 7h1v1h-1zM11 7h1v1h-1zM3 8h1v1h-1zM5 8h1v1h-1zM7 8h1v1h-1zM2 9h1v1h-1zM4 9h1v1h-1zM6 9h1v1h-1zM2 10h1v1h-1zM4 10h1v1h-1zM2 11h1v1h-1zM6 11h1v1h-1z"/><path fill="#000000" d="M14 4h1v1h-1zM14 5h1v1h-1zM13 6h1v1h-1zM12 7h2v1h-2zM15 8h1v1h-1zM14 9h1v1h-1zM14 10h1v1h-1zM12 11h2v1h-2zM12 12h1v1h-1zM1 13h1v1h-1zM3 13h1v1h-1zM10 13h2v1h-2zM5 14h1v1h-1z"/><path fill="#00ffff" d="M1 12h1v1h-1z"/></svg>
<svg style="left:212px;top:69px" width="16" height="14" shape-rendering="crispEdges"><path fill="#848200" d="M7 1h4v1h-4zM6 2h2v1h-2zM10 2h2v1h-2zM10 3h2v1h-2zM11 4h1v1h-1zM13 10h1v1h-1z"/><path fill="#ffffff" d="M8 2h2v1h-2zM8 3h2v1h-2zM9 4h1v1h-1zM9 5h1v1h-1zM9 7h1v1h-1zM10 8h1v1h-1zM11 9h1v1h-1zM12 10h1v1h-1zM12 11h1v1h-1zM13 12h1v1h-1z"/><path fill="#000000" d="M12 2h1v1h-1zM12 3h1v1h-1zM10 4h1v1h-1zM12 4h1v1h-1zM10 5h3v1h-3zM9 6h1v1h-1zM10 7h1v1h-1zM8 8h1v1h-1zM11 8h1v1h-1zM9 9h1v1h-1zM12 9h2v1h-2zM10 10h1v1h-1zM15 10h1v1h-1zM10 11h1v1h-1zM15 11h1v1h-1zM11 12h1v1h-1zM14 12h2v1h-2zM11 13h5v1h-5z"/><path fill="#ffff00" d="M2 3h5v1h-5zM1 4h7v1h-7zM1 5h2v1h-2zM5 5h3v1h-3zM5 6h2v1h-2zM8 6h1v1h-1zM4 7h3v1h-3zM8 7h1v1h-1zM3 8h3v1h-3zM9 8h1v1h-1zM3 9h2v1h-2zM10 9h1v1h-1zM11 10h1v1h-1zM14 10h1v1h-1zM3 11h2v1h-2zM11 11h1v1h-1zM13 11h2v1h-2zM3 12h2v1h-2zM12 12h1v1h-1z"/></svg>
<svg style="left:235px;top:69px" width="16" height="13" shape-rendering="crispEdges"><path fill="#000000" d="M10 1h5v1h-5zM11 2h4v1h-4zM10 3h5v1h-5zM9 4h2v1h-2zM12 4h2v1h-2zM8 5h2v1h-2zM0 6h4v1h-4zM6 6h3v1h-3zM0 7h4v1h-4zM6 7h2v1h-2zM0 8h4v1h-4zM8 8h2v1h-2zM9 9h2v1h-2zM12 9h2v1h-2zM10 10h5v1h-5zM11 11h4v1h-4zM10 12h5v1h-5z"/><path fill="#ffff00" d="M3 2h4v1h-4zM2 3h2v1h-2zM6 3h2v1h-2zM6 4h2v1h-2zM5 5h2v1h-2zM4 6h2v1h-2zM4 7h2v1h-2zM4 9h2v1h-2zM4 10h2v1h-2z"/></svg>
<svg style="left:258px;top:69px" width="16" height="15" shape-rendering="crispEdges"><path fill="#000000" d="M7 0h2v1h-2zM11 0h3v1h-3zM7 1h4v1h-4zM12 1h2v1h-2zM9 2h2v1h-2zM9 4h2v1h-2zM12 4h3v1h-3zM0 5h1v1h-1zM11 5h1v1h-1zM6 6h1v1h-1zM11 7h4v1h-4zM6 8h1v1h-1zM1 10h2v1h-2zM11 10h2v1h-2zM3 11h2v1h-2zM13 11h2v1h-2zM4 12h1v1h-1zM5 13h1v1h-1zM10 13h2v1h-2zM6 14h2v1h-2zM12 14h2v1h-2z"/><path fill="#ffff00" d="M6 1h1v1h-1zM5 2h3v1h-3zM4 3h2v1h-2zM7 3h1v1h-1zM3 4h3v1h-3zM7 4h1v1h-1zM1 5h4v1h-4zM7 5h1v1h-1zM0 6h2v1h-2zM7 6h3v1h-3zM0 7h7v1h-7zM0 8h6v1h-6zM7 8h1v1h-1zM0 9h6v1h-6zM7 9h2v1h-2zM0 10h1v1h-1zM3 10h3v1h-3zM7 10h1v1h-1zM5 11h1v1h-1zM7 11h1v1h-1zM5 12h3v1h-3zM6 13h2v1h-2z"/><path fill="#ffffff" d="M8 2h1v1h-1zM8 3h1v1h-1zM8 4h1v1h-1zM5 5h1v1h-1zM8 5h1v1h-1zM2 6h4v1h-4zM8 7h1v1h-1zM8 8h1v1h-1zM8 11h1v1h-1zM8 12h1v1h-1z"/><path fill="#848284" d="M6 3h1v1h-1zM6 4h1v1h-1zM6 5h1v1h-1zM10 6h1v1h-1zM7 7h1v1h-1zM10 8h1v1h-1zM6 9h1v1h-1zM10 9h1v1h-1zM6 10h1v1h-1zM6 11h1v1h-1z"/></svg>
<svg style="left:281px;top:69px" width="16" height="11" shape-rendering="crispEdges"><path fill="#848284" d="M0 1h15v1h-15zM0 2h1v1h-1zM4 2h1v1h-1zM8 2h1v1h-1zM11 2h1v1h-1zM13 2h2v1h-2zM0 3h15v1h-15zM5 4h1v1h-1zM9 4h3v1h-3zM13 4h2v1h-2zM5 5h2v1h-2zM9 5h2v1h-2zM12 5h3v1h-3zM5 6h3v1h-3zM11 6h4v1h-4zM5 7h4v1h-4zM10 7h5v1h-5zM5 8h10v1h-10zM5 9h10v1h-10zM5 10h10v1h-10z"/><path fill="#000000" d="M1 2h3v1h-3zM5 2h3v1h-3zM9 2h2v1h-2zM12 2h1v1h-1zM6 4h3v1h-3zM12 4h1v1h-1zM7 5h2v1h-2zM11 5h1v1h-1zM8 6h3v1h-3zM9 7h1v1h-1z"/></svg>
<svg style="left:304px;top:69px" width="16" height="14" shape-rendering="crispEdges"><path fill="#000000" d="M5 0h1v1h-1zM8 0h3v1h-3zM3 1h1v1h-1zM12 1h1v1h-1zM2 2h1v1h-1zM13 2h1v1h-1zM1 3h1v1h-1zM14 3h1v1h-1zM1 4h1v1h-1zM14 4h1v1h-1zM0 5h1v1h-1zM15 5h1v1h-1zM0 6h1v1h-1zM15 6h1v1h-1zM0 7h1v1h-1zM15 7h1v1h-1zM0 8h1v1h-1zM15 8h1v1h-1zM1 9h1v1h-1zM14 9h1v1h-1zM1 10h1v1h-1zM14 10h1v1h-1zM2 11h1v1h-1zM13 11h1v1h-1zM3 12h1v1h-1zM12 12h1v1h-1zM5 13h1v1h-1zM10 13h1v1h-1z"/><path fill="#00ff00" d="M6 0h2v1h-2zM5 1h2v1h-2zM5 2h3v1h-3zM12 2h1v1h-1zM6 3h4v1h-4zM13 3h1v1h-1zM7 4h3v1h-3zM13 4h1v1h-1zM6 5h6v1h-6zM14 5h1v1h-1zM7 6h6v1h-6zM8 7h5v1h-5zM8 8h4v1h-4zM8 9h3v1h-3zM8 10h2v1h-2zM8 11h1v1h-1z"/><path fill="#0000ff" d="M4 1h1v1h-1zM7 1h5v1h-5zM3 2h2v1h-2zM8 2h4v1h-4zM2 3h4v1h-4zM10 3h3v1h-3zM2 4h5v1h-5zM10 4h3v1h-3zM1 5h5v1h-5zM12 5h2v1h-2zM1 6h6v1h-6zM13 6h2v1h-2zM1 7h7v1h-7zM13 7h2v1h-2zM1 8h7v1h-7zM12 8h3v1h-3zM2 9h6v1h-6zM11 9h3v1h-3zM2 10h6v1h-6zM10 10h4v1h-4zM3 11h5v1h-5zM9 11h4v1h-4zM4 12h8v1h-8z"/><path fill="#00ffff" d="M6 13h4v1h-4z"/></svg>
<svg style="left:327px;top:69px" width="16" height="15" shape-rendering="crispEdges"><path fill="#0000ff" d="M0 0h2v1h-2zM1 1h2v1h-2zM2 2h2v1h-2zM5 2h2v1h-2zM3 3h4v1h-4zM3 4h4v1h-4zM2 5h5v1h-5zM6 6h1v1h-1z"/><path fill="#848284" d="M11 4h1v1h-1zM9 9h6v1h-6zM9 10h5v1h-5zM8 11h6v1h-6zM8 12h4v1h-4zM8 13h4v1h-4z"/><path fill="#848200" d="M8 5h1v1h-1zM7 6h2v1h-2zM3 7h2v1h-2zM6 7h3v1h-3zM2 8h2v1h-2zM5 8h1v1h-1zM7 8h4v1h-4zM1 9h2v1h-2zM4 9h1v1h-1zM6 9h1v1h-1zM8 9h1v1h-1zM1 10h1v1h-1zM3 10h1v1h-1zM5 10h1v1h-1zM7 10h2v1h-2zM1 11h1v1h-1zM3 11h1v1h-1zM5 11h3v1h-3zM3 12h3v1h-3zM7 12h1v1h-1zM4 13h4v1h-4z"/><path fill="#ffffff" d="M9 5h5v1h-5zM9 6h5v1h-5zM5 7h1v1h-1zM9 7h4v1h-4zM4 8h1v1h-1zM6 8h1v1h-1zM11 8h1v1h-1zM3 9h1v1h-1zM5 9h1v1h-1zM7 9h1v1h-1zM2 10h1v1h-1zM4 10h1v1h-1zM6 10h1v1h-1zM2 11h1v1h-1zM4 11h1v1h-1zM2 12h1v1h-1zM6 12h1v1h-1z"/><path fill="#000000" d="M14 5h1v1h-1zM14 6h1v1h-1zM13 7h1v1h-1zM12 8h2v1h-2zM15 9h1v1h-1zM14 10h1v1h-1zM14 11h1v1h-1zM12 12h2v1h-2zM1 13h1v1h-1zM3 13h1v1h-1zM12 13h1v1h-1zM5 14h1v1h-1zM8 14h4v1h-4z"/><path fill="#00ffff" d="M1 12h1v1h-1z"/></svg>
<svg style="left:350px;top:69px" width="16" height="14" shape-rendering="crispEdges"><path fill="#0000ff" d="M0 0h2v1h-2zM0 1h3v1h-3zM1 2h3v1h-3zM6 2h1v1h-1zM2 3h5v1h-5zM3 4h4v1h-4zM3 5h4v1h-4zM2 6h5v1h-5z"/><path fill="#848200" d="M7 2h1v1h-1zM12 4h1v1h-1zM7 5h4v1h-4zM11 6h1v1h-1zM6 7h1v1h-1zM11 7h1v1h-1zM4 8h1v1h-1zM6 8h1v1h-1zM10 8h2v1h-2zM14 8h2v1h-2zM8 9h5v1h-5zM8 10h6v1h-6zM8 11h5v1h-5zM7 12h5v1h-5zM6 13h3v1h-3z"/><path fill="#000000" d="M8 2h2v1h-2zM10 3h2v1h-2zM8 4h1v1h-1zM13 4h2v1h-2zM13 5h1v1h-1zM15 5h1v1h-1zM15 6h1v1h-1zM2 7h1v1h-1zM12 7h1v1h-1zM1 8h1v1h-1zM12 8h1v1h-1zM1 9h1v1h-1zM13 9h1v1h-1zM15 9h1v1h-1zM14 10h2v1h-2zM1 11h1v1h-1zM13 11h2v1h-2zM3 12h1v1h-1zM12 12h1v1h-1zM5 13h1v1h-1zM9 13h2v1h-2z"/><path fill="#ffffff" d="M7 3h1v1h-1zM7 4h1v1h-1zM10 6h1v1h-1zM5 7h1v1h-1zM7 7h1v1h-1zM14 7h1v1h-1zM2 8h1v1h-1zM5 8h1v1h-1zM2 9h2v1h-2zM6 9h1v1h-1zM2 10h1v1h-1zM5 10h2v1h-2zM5 11h1v1h-1zM4 12h2v1h-2z"/><path fill="#ffff00" d="M8 3h2v1h-2zM9 4h3v1h-3zM11 5h2v1h-2zM7 6h3v1h-3zM12 6h3v1h-3zM3 7h2v1h-2zM8 7h3v1h-3zM13 7h1v1h-1zM3 8h1v1h-1zM7 8h3v1h-3zM13 8h1v1h-1zM4 9h2v1h-2zM7 9h1v1h-1zM14 9h1v1h-1zM3 10h2v1h-2zM7 10h1v1h-1zM2 11h3v1h-3zM6 11h2v1h-2zM6 12h1v1h-1z"/></svg>
<svg style="left:373px;top:69px" width="16" height="15" shape-rendering="crispEdges"><path fill="#000000" d="M1 1h1v1h-1zM0 2h2v1h-2zM5 2h9v1h-9zM1 3h1v1h-1zM0 4h3v1h-3zM0 6h3v1h-3zM2 7h1v1h-1zM5 7h9v1h-9zM1 8h1v1h-1zM0 9h3v1h-3zM0 11h3v1h-3zM2 12h1v1h-1zM5 12h9v1h-9zM1 13h2v1h-2zM0 14h3v1h-3z"/></svg>
<svg style="left:396px;top:69px" width="16" height="13" shape-rendering="crispEdges"><path fill="#000084" d="M0 1h11v1h-11zM0 2h1v1h-1zM10 2h1v1h-1zM0 3h1v1h-1zM2 3h6v1h-6zM10 3h1v1h-1zM0 4h1v1h-1zM2 4h1v1h-1zM7 4h1v1h-1zM10 4h1v1h-1zM0 5h1v1h-1zM2 5h6v1h-6zM10 5h1v1h-1zM0 6h1v1h-1zM2 6h1v1h-1zM7 6h1v1h-1zM0 7h1v1h-1zM2 7h6v1h-6zM0 8h1v1h-1zM2 8h1v1h-1zM7 8h1v1h-1zM0 9h1v1h-1zM2 9h6v1h-6zM0 10h1v1h-1zM7 10h1v1h-1zM0 11h1v1h-1zM10 11h1v1h-1zM0 12h12v1h-12z"/><path fill="#ffffff" d="M1 2h9v1h-9zM1 3h1v1h-1zM8 3h2v1h-2zM1 4h1v1h-1zM3 4h4v1h-4zM8 4h2v1h-2zM1 5h1v1h-1zM8 5h2v1h-2zM1 6h1v1h-1zM3 6h4v1h-4zM1 7h1v1h-1zM1 8h1v1h-1zM3 8h4v1h-4zM1 9h1v1h-1zM1 10h6v1h-6zM1 11h9v1h-9z"/><path fill="#0000ff" d="M11 5h1v1h-1zM8 6h6v1h-6zM8 7h7v1h-7zM8 8h8v1h-8zM8 9h7v1h-7zM8 10h6v1h-6zM11 11h1v1h-1z"/></svg>
<svg style="left:419px;top:69px" width="16" height="14" shape-rendering="crispEdges"><path fill="#000084" d="M0 1h12v1h-12zM0 2h1v1h-1zM11 2h1v1h-1zM0 3h1v1h-1zM2 3h6v1h-6zM11 3h1v1h-1zM0 4h1v1h-1zM2 4h1v1h-1zM7 4h1v1h-1zM11 4h1v1h-1zM0 5h1v1h-1zM2 5h6v1h-6zM11 5h1v1h-1zM0 6h1v1h-1zM2 6h1v1h-1zM7 6h1v1h-1zM11 6h1v1h-1zM0 7h1v1h-1zM2 7h5v1h-5zM0 8h1v1h-1zM2 8h1v1h-1zM0 9h1v1h-1zM2 9h5v1h-5zM0 10h1v1h-1zM7 10h1v1h-1zM0 11h1v1h-1zM11 11h1v1h-1zM0 12h10v1h-10z"/><path fill="#ffffff" d="M1 2h10v1h-10zM1 3h1v1h-1zM8 3h3v1h-3zM1 4h1v1h-1zM3 4h4v1h-4zM8 4h3v1h-3zM1 5h1v1h-1zM8 5h1v1h-1zM1 6h1v1h-1zM3 6h4v1h-4zM1 7h1v1h-1zM1 8h1v1h-1zM3 8h4v1h-4zM1 9h1v1h-1zM1 10h6v1h-6zM1 11h8v1h-8z"/><path fill="#000000" d="M13 2h1v1h-1zM12 3h3v1h-3zM10 5h1v1h-1zM13 5h2v1h-2zM10 6h1v1h-1zM12 6h1v1h-1zM11 7h4v1h-4zM11 8h1v1h-1zM11 9h3v1h-3zM10 10h2v1h-2zM13 10h2v1h-2zM10 11h1v1h-1zM13 11h1v1h-1zM10 12h3v1h-3zM10 13h1v1h-1zM12 13h2v1h-2z"/><path fill="#ffff00" d="M9 5h1v1h-1zM8 6h2v1h-2zM7 7h4v1h-4zM7 8h4v1h-4zM7 9h4v1h-4zM8 10h2v1h-2zM9 11h1v1h-1z"/></svg>
<svg style="left:442px;top:69px" width="16" height="15" shape-rendering="crispEdges"><path fill="#0000ff" d="M1 1h14v1h-14zM1 2h1v1h-1zM14 2h1v1h-1zM1 3h1v1h-1zM14 3h1v1h-1zM1 4h14v1h-14zM1 5h1v1h-1zM14 5h1v1h-1zM1 6h1v1h-1zM14 6h1v1h-1zM1 7h1v1h-1zM14 7h1v1h-1zM1 8h1v1h-1zM14 8h1v1h-1zM1 9h1v1h-1zM14 9h1v1h-1zM1 10h1v1h-1zM14 10h1v1h-1zM1 11h1v1h-1zM1 12h1v1h-1zM14 12h1v1h-1zM1 13h1v1h-1zM14 13h1v1h-1zM1 14h8v1h-8zM13 14h2v1h-2z"/><path fill="#a59e84" d="M2 2h12v1h-12zM2 3h12v1h-12z"/><path fill="#ffffff" d="M2 5h12v1h-12zM2 6h12v1h-12zM2 7h12v1h-12zM2 8h7v1h-7zM13 8h1v1h-1zM2 9h7v1h-7zM13 9h1v1h-1zM2 10h5v1h-5zM2 11h5v1h-5zM2 12h5v1h-5zM2 13h7v1h-7zM13 13h1v1h-1z"/><path fill="#008200" d="M9 8h1v1h-1zM12 8h1v1h-1zM9 9h1v1h-1zM12 9h1v1h-1zM7 10h2v1h-2zM13 10h1v1h-1zM7 11h1v1h-1zM14 11h1v1h-1zM7 12h2v1h-2zM13 12h1v1h-1zM9 13h1v1h-1zM12 13h1v1h-1zM9 14h1v1h-1zM12 14h1v1h-1z"/><path fill="#00ff00" d="M10 8h2v1h-2zM10 9h2v1h-2zM9 10h4v1h-4zM8 11h6v1h-6zM9 12h4v1h-4zM10 13h2v1h-2zM10 14h2v1h-2z"/></svg>
<svg style="left:465px;top:69px" width="16" height="15" shape-rendering="crispEdges"><path fill="#000000" d="M9 0h1v1h-1zM13 0h1v1h-1zM9 1h1v1h-1zM13 1h2v1h-2zM9 2h7v1h-7zM9 3h1v1h-1zM13 3h2v1h-2zM9 4h1v1h-1zM13 4h1v1h-1zM9 5h1v1h-1zM13 5h1v1h-1zM1 6h3v1h-3zM6 6h9v1h-9zM1 7h3v1h-3zM6 7h10v1h-10zM1 8h3v1h-3zM9 8h1v1h-1zM13 8h2v1h-2zM9 9h1v1h-1zM13 9h1v1h-1zM9 10h1v1h-1zM13 10h1v1h-1zM9 11h1v1h-1zM13 11h2v1h-2zM9 12h7v1h-7zM9 13h1v1h-1zM13 13h2v1h-2zM9 14h1v1h-1zM13 14h1v1h-1z"/><path fill="#ffff00" d="M3 2h4v1h-4zM2 3h2v1h-2zM6 3h2v1h-2zM6 4h2v1h-2zM5 5h2v1h-2zM4 6h2v1h-2zM4 7h2v1h-2zM5 9h2v1h-2zM5 10h2v1h-2z"/></svg>
<svg style="left:488px;top:69px" width="16" height="14" shape-rendering="crispEdges"><path fill="#000084" d="M2 1h12v1h-12zM2 2h1v1h-1zM13 2h1v1h-1zM2 3h1v1h-1zM13 3h1v1h-1zM2 4h1v1h-1zM13 4h1v1h-1zM2 5h1v1h-1zM13 5h1v1h-1zM2 6h1v1h-1zM13 6h1v1h-1zM2 7h1v1h-1zM13 7h1v1h-1zM2 8h1v1h-1zM13 8h1v1h-1zM2 9h1v1h-1zM13 9h1v1h-1zM2 10h1v1h-1zM13 10h1v1h-1zM2 11h1v1h-1zM13 11h1v1h-1zM2 12h1v1h-1zM13 12h1v1h-1zM2 13h12v1h-12z"/><path fill="#00ffff" d="M3 2h10v1h-10zM3 3h2v1h-2zM10 3h3v1h-3zM3 4h1v1h-1zM6 4h3v1h-3zM11 4h2v1h-2zM3 5h7v1h-7zM12 5h1v1h-1zM3 6h6v1h-6zM11 6h2v1h-2zM3 7h5v1h-5zM10 7h3v1h-3zM3 8h5v1h-5zM10 8h3v1h-3zM3 9h10v1h-10zM3 10h5v1h-5zM10 10h3v1h-3zM3 11h5v1h-5zM10 11h3v1h-3zM3 12h10v1h-10z"/><path fill="#0000ff" d="M5 3h5v1h-5zM4 4h2v1h-2zM9 4h2v1h-2zM10 5h2v1h-2zM9 6h2v1h-2zM8 7h2v1h-2zM8 8h2v1h-2zM8 10h2v1h-2zM8 11h2v1h-2z"/></svg>
<svg style="left:517px;top:69px" width="16" height="15" shape-rendering="crispEdges"><path fill="#848284" d="M6 0h3v1h-3zM10 0h3v1h-3zM5 1h4v1h-4zM11 1h5v1h-5zM4 2h5v1h-5zM11 2h1v1h-1zM1 3h8v1h-8zM11 3h5v1h-5zM1 4h1v1h-1zM7 4h3v1h-3zM11 4h1v1h-1zM1 5h9v1h-9zM11 5h5v1h-5zM1 6h9v1h-9zM11 6h1v1h-1zM1 7h9v1h-9zM11 7h1v1h-1zM15 7h1v1h-1zM1 8h4v1h-4zM6 8h3v1h-3zM10 8h5v1h-5zM0 9h1v1h-1zM4 9h5v1h-5zM10 9h3v1h-3zM0 10h1v1h-1zM3 10h1v1h-1zM5 10h9v1h-9zM0 11h1v1h-1zM2 11h2v1h-2zM5 11h1v1h-1zM7 11h5v1h-5zM1 12h1v1h-1zM5 12h1v1h-1zM2 13h3v1h-3z"/><path fill="#ffffff" d="M9 1h1v1h-1zM9 2h1v1h-1zM12 2h4v1h-4zM9 3h1v1h-1zM2 4h5v1h-5zM12 4h4v1h-4zM10 5h1v1h-1zM10 6h1v1h-1zM12 6h4v1h-4zM10 7h1v1h-1zM12 7h3v1h-3zM5 8h1v1h-1zM1 9h3v1h-3zM9 9h1v1h-1zM13 9h1v1h-1zM1 10h2v1h-2zM4 10h1v1h-1zM14 10h1v1h-1zM1 11h1v1h-1zM4 11h1v1h-1zM6 11h1v1h-1zM12 11h1v1h-1zM2 12h3v1h-3zM6 12h7v1h-7zM5 13h1v1h-1zM2 14h4v1h-4z"/></svg>
<svg style="left:540px;top:69px" width="16" height="13" shape-rendering="crispEdges"><path fill="#848284" d="M0 1h15v1h-15zM0 2h15v1h-15zM5 3h10v1h-10zM4 4h11v1h-11zM4 5h11v1h-11zM4 6h11v1h-11zM4 7h11v1h-11zM2 8h13v1h-13zM1 9h1v1h-1zM5 9h10v1h-10zM0 10h1v1h-1zM2 10h1v1h-1zM4 10h1v1h-1zM6 10h9v1h-9zM0 11h1v1h-1zM4 11h1v1h-1zM1 12h3v1h-3z"/><path fill="#ffffff" d="M0 3h5v1h-5zM15 4h1v1h-1zM15 5h1v1h-1zM15 6h1v1h-1zM15 7h1v1h-1zM15 8h1v1h-1zM2 9h3v1h-3zM15 9h1v1h-1zM1 10h1v1h-1zM3 10h1v1h-1zM5 10h1v1h-1zM15 10h1v1h-1zM1 11h3v1h-3zM5 11h11v1h-11zM4 12h1v1h-1z"/></svg>
<svg style="left:563px;top:69px" width="16" height="15" shape-rendering="crispEdges"><path fill="#848284" d="M7 0h5v1h-5zM4 1h9v1h-9zM4 2h3v1h-3zM11 2h3v1h-3zM11 3h3v1h-3zM3 4h3v1h-3zM12 4h3v1h-3zM2 5h5v1h-5zM11 5h5v1h-5zM1 6h6v1h-6zM12 6h3v1h-3zM3 7h2v1h-2zM12 7h1v1h-1zM3 8h2v1h-2zM1 9h4v1h-4zM6 9h8v1h-8zM0 10h1v1h-1zM4 10h9v1h-9zM0 11h1v1h-1zM2 11h1v1h-1zM4 11h8v1h-8zM0 12h1v1h-1zM4 12h1v1h-1zM1 13h3v1h-3z"/><path fill="#ffffff" d="M7 2h4v1h-4zM5 3h2v1h-2zM15 6h1v1h-1zM6 7h1v1h-1zM13 7h1v1h-1zM6 8h1v1h-1zM5 9h1v1h-1zM14 9h1v1h-1zM1 10h3v1h-3zM13 10h1v1h-1zM1 11h1v1h-1zM3 11h1v1h-1zM12 11h2v1h-2zM1 12h3v1h-3zM5 12h8v1h-8zM4 13h1v1h-1zM2 14h3v1h-3z"/></svg>
<svg style="left:586px;top:69px" width="16" height="13" shape-rendering="crispEdges"><path fill="#848284" d="M3 0h5v1h-5zM2 1h11v1h-11zM1 2h13v1h-13zM1 3h6v1h-6zM8 3h6v1h-6zM1 4h5v1h-5zM8 4h7v1h-7zM1 5h4v1h-4zM6 5h2v1h-2zM10 5h5v1h-5zM1 6h3v1h-3zM8 6h6v1h-6zM1 7h3v1h-3zM8 7h6v1h-6zM0 8h4v1h-4zM8 8h6v1h-6zM0 9h1v1h-1zM4 9h1v1h-1zM8 9h5v1h-5zM0 10h1v1h-1zM2 10h1v1h-1zM4 10h1v1h-1zM8 10h6v1h-6zM0 11h1v1h-1zM4 11h1v1h-1zM8 11h7v1h-7zM1 12h3v1h-3zM8 12h7v1h-7z"/><path fill="#ffffff" d="M13 1h1v1h-1zM14 2h1v1h-1zM7 3h1v1h-1zM14 3h1v1h-1zM6 4h2v1h-2zM15 4h1v1h-1zM5 5h1v1h-1zM8 5h2v1h-2zM15 5h1v1h-1zM4 6h2v1h-2zM7 6h1v1h-1zM14 6h1v1h-1zM6 7h2v1h-2zM14 7h1v1h-1zM4 8h1v1h-1zM6 8h1v1h-1zM14 8h1v1h-1zM1 9h3v1h-3zM5 9h1v1h-1zM7 9h1v1h-1zM13 9h1v1h-1zM1 10h1v1h-1zM3 10h1v1h-1zM5 10h1v1h-1zM7 10h1v1h-1zM14 10h1v1h-1zM1 11h3v1h-3zM5 11h1v1h-1zM7 11h1v1h-1zM15 11h1v1h-1zM4 12h1v1h-1zM7 12h1v1h-1zM15 12h1v1h-1z"/></svg>
<svg style="left:609px;top:69px" width="16" height="14" shape-rendering="crispEdges"><path fill="#848284" d="M8 0h1v1h-1zM8 1h1v1h-1zM8 2h1v1h-1zM8 3h1v1h-1zM8 4h1v1h-1zM8 5h1v1h-1zM4 6h8v1h-8zM5 7h7v1h-7zM6 8h5v1h-5zM1 9h3v1h-3zM7 9h3v1h-3zM0 10h1v1h-1zM4 10h1v1h-1zM8 10h1v1h-1zM0 11h1v1h-1zM2 11h1v1h-1zM4 11h1v1h-1zM0 12h1v1h-1zM4 12h1v1h-1zM1 13h3v1h-3z"/><path fill="#ffffff" d="M9 0h1v1h-1zM9 1h1v1h-1zM9 2h1v1h-1zM9 3h1v1h-1zM9 4h1v1h-1zM9 5h1v1h-1zM12 6h1v1h-1zM12 7h1v1h-1zM11 8h1v1h-1zM10 9h1v1h-1zM1 10h3v1h-3zM9 10h1v1h-1zM1 11h1v1h-1zM3 11h1v1h-1zM5 11h1v1h-1zM1 12h3v1h-3zM5 12h1v1h-1zM4 13h1v1h-1z"/></svg>
<svg style="left:638px;top:69px" width="16" height="14" shape-rendering="crispEdges"><path fill="#000000" d="M6 0h1v1h-1zM8 0h1v1h-1zM3 1h2v1h-2zM9 1h4v1h-4zM2 2h1v1h-1zM13 2h1v1h-1zM1 3h1v1h-1zM15 3h1v1h-1zM1 4h1v1h-1zM5 4h3v1h-3zM14 4h1v1h-1zM4 5h1v1h-1zM8 5h1v1h-1zM11 5h1v1h-1zM14 5h1v1h-1zM4 6h1v1h-1zM8 6h1v1h-1zM15 6h1v1h-1zM0 7h1v1h-1zM4 7h1v1h-1zM8 7h1v1h-1zM15 7h1v1h-1zM5 8h3v1h-3zM14 8h1v1h-1zM1 9h1v1h-1zM13 9h1v1h-1zM1 10h1v1h-1zM14 10h1v1h-1zM2 11h1v1h-1zM13 11h1v1h-1zM3 12h2v1h-2zM9 12h4v1h-4zM6 13h1v1h-1zM8 13h1v1h-1z"/><path fill="#ffff00" d="M7 0h1v1h-1zM6 1h3v1h-3zM3 2h4v1h-4zM8 2h2v1h-2zM2 3h2v1h-2zM5 3h5v1h-5zM2 4h3v1h-3zM8 4h2v1h-2zM1 5h3v1h-3zM9 5h1v1h-1zM1 6h3v1h-3zM9 6h1v1h-1zM1 7h3v1h-3zM9 7h1v1h-1zM1 8h4v1h-4zM8 8h2v1h-2zM2 9h2v1h-2zM5 9h5v1h-5zM2 10h5v1h-5zM8 10h1v1h-1zM3 11h7v1h-7zM6 12h3v1h-3zM7 13h1v1h-1z"/><path fill="#ffffff" d="M7 2h1v1h-1zM4 3h1v1h-1zM4 9h1v1h-1zM7 10h1v1h-1z"/><path fill="#848200" d="M10 2h3v1h-3zM10 3h4v1h-4zM10 4h4v1h-4zM5 5h3v1h-3zM12 5h2v1h-2zM5 6h3v1h-3zM10 6h5v1h-5zM5 7h3v1h-3zM10 7h5v1h-5zM10 8h4v1h-4zM10 9h3v1h-3zM9 10h5v1h-5zM10 11h3v1h-3z"/></svg>
<svg style="left:661px;top:69px" width="16" height="14" shape-rendering="crispEdges"><path fill="#000000" d="M9 1h3v1h-3zM7 2h2v1h-2zM12 2h1v1h-1zM5 3h2v1h-2zM13 3h1v1h-1zM2 4h3v1h-3zM13 4h1v1h-1zM1 5h1v1h-1zM14 5h1v1h-1zM1 6h1v1h-1zM14 6h1v1h-1zM1 7h1v1h-1zM15 7h1v1h-1zM2 8h1v1h-1zM14 8h1v1h-1zM2 9h1v1h-1zM13 9h1v1h-1zM2 10h1v1h-1zM12 10h1v1h-1zM2 11h1v1h-1zM10 11h2v1h-2zM2 12h1v1h-1zM8 12h2v1h-2zM3 13h5v1h-5z"/><path fill="#ffff00" d="M9 2h3v1h-3zM7 3h6v1h-6zM5 4h2v1h-2zM9 4h4v1h-4zM2 5h4v1h-4zM10 5h4v1h-4zM2 6h2v1h-2zM10 6h4v1h-4zM2 7h4v1h-4zM11 7h4v1h-4zM3 8h2v1h-2zM12 8h2v1h-2zM3 9h3v1h-3zM11 9h2v1h-2zM3 10h4v1h-4zM4 11h4v1h-4zM6 12h2v1h-2z"/><path fill="#c6c3c6" d="M7 4h1v1h-1zM7 5h2v1h-2zM5 6h1v1h-1zM7 6h2v1h-2zM7 7h3v1h-3zM5 8h1v1h-1zM7 8h1v1h-1zM9 8h2v1h-2zM7 9h2v1h-2zM8 10h2v1h-2z"/><path fill="#ffffff" d="M8 4h1v1h-1zM6 5h1v1h-1zM9 5h1v1h-1zM4 6h1v1h-1zM6 6h1v1h-1zM9 6h1v1h-1zM6 7h1v1h-1zM10 7h1v1h-1zM6 8h1v1h-1zM8 8h1v1h-1zM11 8h1v1h-1zM6 9h1v1h-1zM9 9h2v1h-2zM7 10h1v1h-1zM10 10h2v1h-2zM3 11h1v1h-1zM8 11h2v1h-2zM3 12h3v1h-3z"/></svg>
<svg style="left:684px;top:69px" width="16" height="14" shape-rendering="crispEdges"><path fill="#000000" d="M5 1h5v1h-5zM7 2h1v1h-1zM12 2h1v1h-1zM8 3h1v1h-1zM13 3h1v1h-1zM8 4h1v1h-1zM15 4h1v1h-1zM8 5h2v1h-2zM15 5h1v1h-1zM7 6h1v1h-1zM11 6h1v1h-1zM14 6h1v1h-1zM6 7h1v1h-1zM12 7h2v1h-2zM5 8h1v1h-1zM4 9h1v1h-1zM3 10h1v1h-1zM2 11h1v1h-1zM1 12h1v1h-1zM0 13h1v1h-1z"/><path fill="#848200" d="M8 2h4v1h-4zM9 3h4v1h-4zM9 4h6v1h-6zM10 5h5v1h-5zM12 6h2v1h-2z"/><path fill="#840000" d="M7 5h1v1h-1zM6 6h1v1h-1zM5 7h1v1h-1zM4 8h1v1h-1zM3 9h1v1h-1zM2 10h1v1h-1zM1 11h1v1h-1zM0 12h1v1h-1z"/></svg>
<svg style="left:707px;top:69px" width="16" height="12" shape-rendering="crispEdges"><path fill="#000000" d="M2 0h2v1h-2zM3 1h1v1h-1zM5 1h1v1h-1zM4 2h1v1h-1zM6 2h1v1h-1zM2 3h2v1h-2zM5 3h1v1h-1zM7 3h1v1h-1zM9 3h3v1h-3zM1 4h1v1h-1zM5 4h2v1h-2zM8 4h1v1h-1zM12 4h2v1h-2zM1 5h1v1h-1zM7 5h1v1h-1zM13 5h2v1h-2zM9 6h1v1h-1zM14 6h1v1h-1zM1 7h3v1h-3zM5 7h2v1h-2zM13 7h1v1h-1zM3 8h1v1h-1zM12 8h1v1h-1zM4 9h1v1h-1zM11 9h1v1h-1zM5 10h1v1h-1zM10 10h1v1h-1zM6 11h4v1h-4z"/><path fill="#ffff00" d="M4 1h1v1h-1zM5 2h1v1h-1zM6 3h1v1h-1zM7 4h1v1h-1zM9 4h2v1h-2zM8 5h2v1h-2zM13 6h1v1h-1zM12 7h1v1h-1zM9 10h1v1h-1z"/><path fill="#ffffff" d="M2 4h3v1h-3zM11 4h1v1h-1zM2 5h5v1h-5zM10 5h3v1h-3zM2 6h5v1h-5zM10 6h3v1h-3zM4 7h1v1h-1zM9 7h3v1h-3zM4 8h8v1h-8zM5 9h6v1h-6zM6 10h3v1h-3z"/><path fill="#000084" d="M0 5h1v1h-1zM0 6h2v1h-2z"/><path fill="#848200" d="M7 6h2v1h-2zM7 7h2v1h-2z"/></svg>
<svg style="left:730px;top:69px" width="16" height="14" shape-rendering="crispEdges"><path fill="#848284" d="M1 1h14v1h-14zM1 2h1v1h-1zM5 2h1v1h-1zM9 2h1v1h-1zM14 2h1v1h-1zM1 3h1v1h-1zM5 3h1v1h-1zM9 3h1v1h-1zM14 3h1v1h-1zM1 4h1v1h-1zM5 4h1v1h-1zM9 4h1v1h-1zM14 4h1v1h-1zM1 5h10v1h-10zM1 6h1v1h-1zM5 6h1v1h-1zM9 6h1v1h-1zM1 7h1v1h-1zM5 7h1v1h-1zM1 8h1v1h-1zM5 8h1v1h-1zM13 8h1v1h-1zM1 9h6v1h-6zM12 9h2v1h-2zM1 10h1v1h-1zM5 10h1v1h-1zM14 10h1v1h-1zM1 11h1v1h-1zM5 11h1v1h-1zM14 11h1v1h-1zM1 12h1v1h-1zM5 12h1v1h-1zM14 12h1v1h-1zM1 13h14v1h-14z"/><path fill="#ffffff" d="M2 2h3v1h-3zM6 2h3v1h-3zM10 2h4v1h-4zM2 3h3v1h-3zM10 3h4v1h-4zM2 4h3v1h-3zM6 4h3v1h-3zM10 4h2v1h-2zM2 6h3v1h-3zM6 6h3v1h-3zM2 7h3v1h-3zM6 7h2v1h-2zM2 8h3v1h-3zM6 8h1v1h-1zM2 10h3v1h-3zM11 10h3v1h-3zM2 11h3v1h-3zM10 11h4v1h-4zM2 12h3v1h-3zM9 12h5v1h-5z"/><path fill="#d6d3ce" d="M6 3h3v1h-3z"/><path fill="#840000" d="M12 4h2v1h-2zM11 5h5v1h-5zM11 6h4v1h-4zM12 7h2v1h-2z"/><path fill="#00ff00" d="M10 6h1v1h-1zM8 7h4v1h-4zM7 8h6v1h-6zM7 9h5v1h-5zM7 10h4v1h-4zM8 11h2v1h-2z"/><path fill="#848200" d="M6 10h1v1h-1zM6 11h2v1h-2zM6 12h3v1h-3z"/></svg>
<svg style="left:759px;top:69px" width="16" height="15" shape-rendering="crispEdges"><path fill="#000000" d="M5 0h7v1h-7zM4 1h9v1h-9zM4 2h5v1h-5zM11 2h3v1h-3zM4 3h4v1h-4zM12 3h1v1h-1zM4 4h4v1h-4zM11 4h1v1h-1zM13 4h1v1h-1zM4 5h4v1h-4zM13 5h2v1h-2zM4 6h4v1h-4zM14 6h2v1h-2zM7 7h1v1h-1zM13 7h1v1h-1zM7 8h2v1h-2zM12 8h2v1h-2zM3 9h3v1h-3zM7 9h1v1h-1zM12 9h1v1h-1zM4 10h2v1h-2zM7 10h2v1h-2zM12 10h1v1h-1zM3 11h3v1h-3zM7 11h1v1h-1zM10 11h2v1h-2zM2 12h2v1h-2zM5 12h1v1h-1zM7 12h1v1h-1zM11 12h1v1h-1zM13 12h1v1h-1zM1 13h2v1h-2zM7 13h1v1h-1zM0 14h8v1h-8z"/><path fill="#ffffff" d="M9 2h2v1h-2zM8 3h4v1h-4zM8 4h3v1h-3zM12 4h1v1h-1zM8 5h4v1h-4zM8 6h6v1h-6zM8 7h5v1h-5zM1 8h6v1h-6zM9 8h3v1h-3zM1 9h2v1h-2zM6 9h1v1h-1zM8 9h4v1h-4zM1 10h3v1h-3zM6 10h1v1h-1zM9 10h3v1h-3zM1 11h2v1h-2zM6 11h1v1h-1zM8 11h2v1h-2zM1 12h1v1h-1zM4 12h1v1h-1zM6 12h1v1h-1zM9 12h2v1h-2zM3 13h4v1h-4z"/><path fill="#0000ff" d="M12 5h1v1h-1zM8 12h1v1h-1zM12 12h1v1h-1zM8 13h7v1h-7z"/><path fill="#848284" d="M0 7h7v1h-7zM0 8h1v1h-1zM0 9h1v1h-1zM0 10h1v1h-1zM0 11h1v1h-1zM0 12h1v1h-1zM0 13h1v1h-1z"/></svg>
<svg style="left:782px;top:69px" width="16" height="15" shape-rendering="crispEdges"><path fill="#848284" d="M0 1h15v1h-15zM0 2h1v1h-1zM4 2h1v1h-1zM8 2h1v1h-1zM11 2h1v1h-1zM13 2h2v1h-2zM0 3h15v1h-15zM5 4h1v1h-1zM9 4h3v1h-3zM13 4h2v1h-2zM5 5h2v1h-2zM9 5h2v1h-2zM12 5h3v1h-3zM5 6h3v1h-3zM11 6h4v1h-4zM0 7h7v1h-7zM8 7h1v1h-1zM10 7h5v1h-5zM0 8h1v1h-1zM8 8h7v1h-7zM0 9h1v1h-1zM8 9h7v1h-7zM0 10h1v1h-1zM8 10h7v1h-7zM0 11h1v1h-1zM0 12h1v1h-1zM0 13h1v1h-1z"/><path fill="#000000" d="M1 2h3v1h-3zM5 2h3v1h-3zM9 2h2v1h-2zM12 2h1v1h-1zM6 4h3v1h-3zM12 4h1v1h-1zM7 5h2v1h-2zM11 5h1v1h-1zM8 6h3v1h-3zM7 7h1v1h-1zM9 7h1v1h-1zM7 8h1v1h-1zM3 9h3v1h-3zM7 9h1v1h-1zM4 10h2v1h-2zM7 10h1v1h-1zM3 11h3v1h-3zM7 11h1v1h-1zM2 12h2v1h-2zM5 12h1v1h-1zM7 12h1v1h-1zM1 13h2v1h-2zM7 13h1v1h-1zM0 14h8v1h-8z"/><path fill="#ffffff" d="M1 8h6v1h-6zM1 9h2v1h-2zM6 9h1v1h-1zM1 10h3v1h-3zM6 10h1v1h-1zM1 11h2v1h-2zM6 11h1v1h-1zM1 12h1v1h-1zM4 12h1v1h-1zM6 12h1v1h-1zM3 13h4v1h-4z"/></svg>
<svg style="left:805px;top:69px" width="16" height="15" shape-rendering="crispEdges"><path fill="#000000" d="M0 0h1v1h-1zM11 0h1v1h-1zM1 1h1v1h-1zM11 1h1v1h-1zM2 2h1v1h-1zM9 2h3v1h-3zM3 3h1v1h-1zM9 3h1v1h-1zM4 4h1v1h-1zM7 4h1v1h-1zM9 4h1v1h-1zM5 5h1v1h-1zM7 5h1v1h-1zM10 5h1v1h-1zM6 6h2v1h-2zM10 6h2v1h-2zM13 6h1v1h-1zM7 7h1v1h-1zM11 7h5v1h-5zM7 8h2v1h-2zM3 9h3v1h-3zM7 9h3v1h-3zM15 9h1v1h-1zM4 10h2v1h-2zM7 10h1v1h-1zM9 10h2v1h-2zM14 10h2v1h-2zM3 11h3v1h-3zM7 11h1v1h-1zM10 11h1v1h-1zM13 11h2v1h-2zM2 12h2v1h-2zM5 12h1v1h-1zM7 12h1v1h-1zM12 12h1v1h-1zM1 13h2v1h-2zM7 13h1v1h-1zM13 13h1v1h-1zM0 14h8v1h-8zM14 14h1v1h-1z"/><path fill="#848200" d="M7 0h1v1h-1zM10 0h1v1h-1zM7 1h1v1h-1zM10 1h1v1h-1zM7 2h1v1h-1zM7 3h1v1h-1zM12 9h1v1h-1zM13 10h1v1h-1zM11 11h2v1h-2z"/><path fill="#ffffff" d="M8 0h2v1h-2zM8 1h2v1h-2zM8 2h1v1h-1zM8 3h1v1h-1zM9 5h1v1h-1zM9 6h1v1h-1zM10 7h1v1h-1zM1 8h6v1h-6zM10 8h2v1h-2zM1 9h2v1h-2zM6 9h1v1h-1zM11 9h1v1h-1zM1 10h3v1h-3zM6 10h1v1h-1zM1 11h2v1h-2zM6 11h1v1h-1zM1 12h1v1h-1zM4 12h1v1h-1zM6 12h1v1h-1zM3 13h4v1h-4z"/><path fill="#ffff00" d="M8 4h1v1h-1zM8 5h1v1h-1zM8 6h1v1h-1zM8 7h2v1h-2zM9 8h1v1h-1zM12 8h4v1h-4zM10 9h1v1h-1zM13 9h2v1h-2zM11 10h2v1h-2z"/><path fill="#848284" d="M0 7h7v1h-7zM0 8h1v1h-1zM0 9h1v1h-1zM0 10h1v1h-1zM0 11h1v1h-1zM0 12h1v1h-1zM0 13h1v1h-1z"/></svg>
<svg style="left:828px;top:69px" width="16" height="15" shape-rendering="crispEdges"><path fill="#000000" d="M8 0h2v1h-2zM10 1h2v1h-2zM8 2h2v1h-2zM11 2h1v1h-1zM11 3h1v1h-1zM4 4h9v1h-9zM4 5h1v1h-1zM11 5h2v1h-2zM4 6h1v1h-1zM11 6h2v1h-2zM7 7h1v1h-1zM12 7h1v1h-1zM7 8h1v1h-1zM12 8h2v1h-2zM3 9h3v1h-3zM7 9h1v1h-1zM9 9h1v1h-1zM12 9h2v1h-2zM4 10h2v1h-2zM7 10h1v1h-1zM9 10h1v1h-1zM11 10h1v1h-1zM14 10h1v1h-1zM3 11h3v1h-3zM7 11h1v1h-1zM9 11h1v1h-1zM12 11h1v1h-1zM14 11h1v1h-1zM2 12h2v1h-2zM5 12h1v1h-1zM7 12h1v1h-1zM9 12h1v1h-1zM13 12h3v1h-3zM1 13h2v1h-2zM7 13h3v1h-3zM14 13h2v1h-2zM0 14h8v1h-8z"/><path fill="#ffff00" d="M8 1h2v1h-2z"/><path fill="#848284" d="M5 5h6v1h-6zM5 6h6v1h-6zM0 7h7v1h-7zM8 7h4v1h-4zM0 8h1v1h-1zM8 8h4v1h-4zM0 9h1v1h-1zM8 9h1v1h-1zM0 10h1v1h-1zM8 10h1v1h-1zM12 10h2v1h-2zM0 11h1v1h-1zM8 11h1v1h-1zM13 11h1v1h-1zM0 12h1v1h-1zM8 12h1v1h-1zM0 13h1v1h-1z"/><path fill="#ffffff" d="M1 8h6v1h-6zM1 9h2v1h-2zM6 9h1v1h-1zM1 10h3v1h-3zM6 10h1v1h-1zM1 11h2v1h-2zM6 11h1v1h-1zM1 12h1v1h-1zM4 12h1v1h-1zM6 12h1v1h-1zM3 13h4v1h-4z"/></svg>
<svg style="left:851px;top:69px" width="16" height="15" shape-rendering="crispEdges"><path fill="#000000" d="M4 0h6v1h-6zM3 1h1v1h-1zM10 1h5v1h-5zM2 2h1v1h-1zM7 2h9v1h-9zM1 3h1v1h-1zM6 3h1v1h-1zM9 3h4v1h-4zM14 3h2v1h-2zM1 4h1v1h-1zM6 4h1v1h-1zM9 4h4v1h-4zM14 4h2v1h-2zM1 5h1v1h-1zM6 5h1v1h-1zM9 5h2v1h-2zM15 5h1v1h-1zM1 6h1v1h-1zM4 6h2v1h-2zM15 6h1v1h-1zM7 7h1v1h-1zM10 7h1v1h-1zM15 7h1v1h-1zM7 8h1v1h-1zM9 8h1v1h-1zM15 8h1v1h-1zM3 9h3v1h-3zM7 9h3v1h-3zM14 9h2v1h-2zM4 10h2v1h-2zM7 10h4v1h-4zM13 10h3v1h-3zM3 11h3v1h-3zM7 11h4v1h-4zM13 11h2v1h-2zM2 12h2v1h-2zM5 12h1v1h-1zM7 12h4v1h-4zM13 12h2v1h-2zM1 13h2v1h-2zM7 13h1v1h-1zM10 13h1v1h-1zM13 13h1v1h-1zM0 14h8v1h-8zM11 14h1v1h-1z"/><path fill="#ffff00" d="M4 1h6v1h-6zM3 2h4v1h-4zM2 3h4v1h-4zM2 4h4v1h-4zM2 5h4v1h-4zM2 6h2v1h-2z"/><path fill="#848284" d="M13 3h1v1h-1zM13 4h1v1h-1zM11 5h4v1h-4zM11 6h4v1h-4zM0 7h7v1h-7zM11 7h4v1h-4zM0 8h1v1h-1zM10 8h5v1h-5zM0 9h1v1h-1zM10 9h4v1h-4zM0 10h1v1h-1zM11 10h2v1h-2zM0 11h1v1h-1zM11 11h2v1h-2zM0 12h1v1h-1zM0 13h1v1h-1z"/><path fill="#ffffff" d="M7 4h2v1h-2zM7 5h2v1h-2zM6 6h5v1h-5zM8 7h2v1h-2zM1 8h6v1h-6zM8 8h1v1h-1zM1 9h2v1h-2zM6 9h1v1h-1zM1 10h3v1h-3zM6 10h1v1h-1zM1 11h2v1h-2zM6 11h1v1h-1zM1 12h1v1h-1zM4 12h1v1h-1zM6 12h1v1h-1zM3 13h4v1h-4z"/><path fill="#c6c3c6" d="M11 12h2v1h-2z"/><path fill="#ff00ff" d="M8 13h2v1h-2zM8 14h3v1h-3z"/><path fill="#00ffff" d="M11 13h2v1h-2zM12 14h2v1h-2z"/></svg>
<svg style="left:874px;top:69px" width="16" height="15" shape-rendering="crispEdges"><path fill="#000000" d="M0 0h1v1h-1zM6 0h9v1h-9zM1 1h1v1h-1zM2 2h1v1h-1zM9 2h6v1h-6zM3 3h1v1h-1zM4 4h1v1h-1zM9 4h6v1h-6zM5 5h1v1h-1zM6 6h9v1h-9zM7 7h1v1h-1zM7 8h8v1h-8zM3 9h3v1h-3zM7 9h1v1h-1zM9 9h1v1h-1zM4 10h2v1h-2zM7 10h1v1h-1zM10 10h1v1h-1zM3 11h3v1h-3zM7 11h1v1h-1zM11 11h1v1h-1zM2 12h2v1h-2zM5 12h1v1h-1zM7 12h1v1h-1zM12 12h1v1h-1zM1 13h2v1h-2zM7 13h1v1h-1zM13 13h1v1h-1zM0 14h8v1h-8z"/><path fill="#848284" d="M8 2h1v1h-1zM8 4h1v1h-1zM0 7h7v1h-7zM0 8h1v1h-1zM0 9h1v1h-1zM0 10h1v1h-1zM0 11h1v1h-1zM0 12h1v1h-1zM0 13h1v1h-1z"/><path fill="#ffffff" d="M1 8h6v1h-6zM1 9h2v1h-2zM6 9h1v1h-1zM1 10h3v1h-3zM6 10h1v1h-1zM1 11h2v1h-2zM6 11h1v1h-1zM1 12h1v1h-1zM4 12h1v1h-1zM6 12h1v1h-1zM3 13h4v1h-4z"/></svg>
<svg style="left:30px;top:90px" width="24" height="16" shape-rendering="crispEdges"><path fill="#c6c3c6" d="M10 0h11v1h-11zM9 1h1v1h-1zM20 1h1v1h-1zM10 2h11v1h-11zM10 3h1v1h-1zM19 3h2v1h-2zM10 4h1v1h-1zM19 4h2v1h-2zM10 5h1v1h-1zM19 5h2v1h-2zM10 6h1v1h-1zM19 6h2v1h-2zM10 7h1v1h-1zM19 7h2v1h-2zM10 8h11v1h-11zM10 9h1v1h-1zM11 10h12v1h-12zM11 11h12v1h-12zM12 12h2v1h-2zM19 12h4v1h-4zM10 13h13v1h-13zM11 14h11v1h-11z"/><path fill="#848200" d="M3 1h4v1h-4zM2 2h1v1h-1zM8 2h1v1h-1zM2 3h1v1h-1zM8 3h1v1h-1zM2 4h1v1h-1zM8 4h1v1h-1zM2 5h1v1h-1zM8 5h1v1h-1zM1 6h9v1h-9zM1 7h1v1h-1zM9 7h1v1h-1zM1 8h1v1h-1zM9 8h1v1h-1zM1 9h1v1h-1zM3 9h7v1h-7zM1 10h1v1h-1zM9 10h1v1h-1zM1 11h1v1h-1zM3 11h8v1h-8zM1 12h1v1h-1zM9 12h1v1h-1zM1 13h1v1h-1zM9 13h1v1h-1z"/><path fill="#000000" d="M7 1h1v1h-1zM21 1h1v1h-1zM3 2h1v1h-1zM7 2h1v1h-1zM21 2h1v1h-1zM3 3h1v1h-1zM7 3h1v1h-1zM21 3h1v1h-1zM3 4h1v1h-1zM7 4h1v1h-1zM21 4h1v1h-1zM3 5h1v1h-1zM7 5h1v1h-1zM21 5h1v1h-1zM21 6h1v1h-1zM21 7h1v1h-1zM21 8h2v1h-2zM11 9h11v1h-11zM23 10h1v1h-1zM23 11h1v1h-1zM14 12h5v1h-5zM23 12h1v1h-1zM23 13h1v1h-1zM1 14h10v1h-10zM22 14h2v1h-2zM8 15h13v1h-13z"/><path fill="#ffffff" d="M10 1h10v1h-10zM9 2h1v1h-1zM9 3h1v1h-1zM9 4h1v1h-1zM12 4h2v1h-2zM9 5h1v1h-1zM12 5h1v1h-1zM2 7h1v1h-1zM2 8h1v1h-1zM2 9h1v1h-1zM2 10h1v1h-1zM10 10h1v1h-1zM2 11h1v1h-1zM2 12h1v1h-1zM2 13h1v1h-1z"/><path fill="#0000ff" d="M11 3h8v1h-8zM11 4h1v1h-1zM14 4h5v1h-5zM11 5h1v1h-1zM13 5h6v1h-6zM11 6h8v1h-8zM11 7h8v1h-8z"/><path fill="#ffff00" d="M3 7h6v1h-6zM3 8h6v1h-6zM3 10h6v1h-6zM3 12h6v1h-6zM3 13h6v1h-6z"/><path fill="#00ff00" d="M10 12h2v1h-2z"/></svg>
<svg style="left:62px;top:106px" width="16" height="16" shape-rendering="crispEdges"><path fill="#00ff00" d="M0 0h16v1h-16zM0 1h1v1h-1zM15 1h1v1h-1zM0 2h1v1h-1zM15 2h1v1h-1zM0 3h1v1h-1zM15 3h1v1h-1zM0 4h1v1h-1zM15 4h1v1h-1zM0 5h1v1h-1zM15 5h1v1h-1zM0 6h1v1h-1zM15 6h1v1h-1zM0 7h1v1h-1zM15 7h1v1h-1zM0 8h1v1h-1zM15 8h1v1h-1zM0 9h1v1h-1zM15 9h1v1h-1zM0 10h1v1h-1zM15 10h1v1h-1zM0 11h1v1h-1zM15 11h1v1h-1zM0 12h1v1h-1zM15 12h1v1h-1zM0 13h1v1h-1zM15 13h1v1h-1zM0 14h1v1h-1zM15 14h1v1h-1zM0 15h16v1h-16z"/><path fill="#ffffff" d="M1 1h2v1h-2zM9 1h6v1h-6zM1 2h1v1h-1zM11 2h4v1h-4zM1 3h1v1h-1zM6 3h1v1h-1zM13 3h2v1h-2zM1 4h1v1h-1zM5 4h1v1h-1zM14 4h1v1h-1zM4 5h1v1h-1zM3 6h1v1h-1zM13 6h2v1h-2zM13 7h1v1h-1zM2 8h1v1h-1zM2 10h2v1h-2zM13 11h2v1h-2zM1 12h2v1h-2zM12 12h3v1h-3zM1 13h4v1h-4zM9 13h6v1h-6zM1 14h14v1h-14z"/><path fill="#000000" d="M3 1h1v1h-1zM7 1h2v1h-2zM2 2h1v1h-1zM5 2h2v1h-2zM10 2h1v1h-1zM2 3h1v1h-1zM5 3h1v1h-1zM7 3h1v1h-1zM12 3h1v1h-1zM10 4h1v1h-1zM6 6h1v1h-1zM5 7h1v1h-1zM4 8h1v1h-1zM11 9h1v1h-1zM13 10h2v1h-2zM1 11h1v1h-1zM12 11h1v1h-1zM3 12h1v1h-1zM11 12h1v1h-1zM5 13h1v1h-1zM7 13h2v1h-2z"/><path fill="#ffff00" d="M4 1h3v1h-3zM3 2h2v1h-2zM7 2h3v1h-3zM3 3h2v1h-2zM8 3h4v1h-4zM2 4h3v1h-3zM6 4h4v1h-4zM11 4h3v1h-3zM1 5h3v1h-3zM5 5h10v1h-10zM1 6h2v1h-2zM4 6h2v1h-2zM7 6h4v1h-4zM12 6h1v1h-1zM1 7h4v1h-4zM6 7h5v1h-5zM12 7h1v1h-1zM1 8h1v1h-1zM3 8h1v1h-1zM5 8h5v1h-5zM12 8h1v1h-1zM1 9h8v1h-8zM12 9h2v1h-2zM1 10h1v1h-1zM4 10h3v1h-3zM2 11h4v1h-4zM4 12h2v1h-2z"/><path fill="#848200" d="M11 6h1v1h-1zM11 7h1v1h-1zM14 7h1v1h-1zM10 8h2v1h-2zM13 8h2v1h-2zM9 9h2v1h-2zM14 9h1v1h-1zM7 10h6v1h-6zM6 11h6v1h-6zM6 12h5v1h-5zM6 13h1v1h-1z"/></svg>
<svg style="left:62px;top:122px" width="16" height="16" shape-rendering="crispEdges"><path fill="#000000" d="M3 1h1v1h-1zM7 1h2v1h-2zM2 2h1v1h-1zM5 2h2v1h-2zM10 2h1v1h-1zM2 3h1v1h-1zM5 3h1v1h-1zM7 3h1v1h-1zM12 3h1v1h-1zM10 4h1v1h-1zM6 6h1v1h-1zM15 6h1v1h-1zM5 7h1v1h-1zM15 7h1v1h-1zM4 8h1v1h-1zM15 8h1v1h-1zM11 9h1v1h-1zM15 9h1v1h-1zM13 10h3v1h-3zM1 11h1v1h-1zM12 11h1v1h-1zM3 12h1v1h-1zM11 12h1v1h-1zM5 13h1v1h-1zM7 13h2v1h-2z"/><path fill="#ffff00" d="M4 1h3v1h-3zM3 2h2v1h-2zM7 2h3v1h-3zM3 3h2v1h-2zM8 3h4v1h-4zM2 4h3v1h-3zM6 4h4v1h-4zM11 4h3v1h-3zM1 5h3v1h-3zM5 5h10v1h-10zM1 6h2v1h-2zM4 6h2v1h-2zM7 6h4v1h-4zM12 6h1v1h-1zM1 7h4v1h-4zM6 7h5v1h-5zM12 7h1v1h-1zM1 8h1v1h-1zM3 8h1v1h-1zM5 8h5v1h-5zM12 8h1v1h-1zM1 9h8v1h-8zM12 9h2v1h-2zM1 10h1v1h-1zM4 10h3v1h-3zM2 11h4v1h-4zM4 12h2v1h-2z"/><path fill="#ffffff" d="M6 3h1v1h-1zM5 4h1v1h-1zM4 5h1v1h-1zM3 6h1v1h-1zM13 6h2v1h-2zM13 7h1v1h-1zM2 8h1v1h-1zM2 10h2v1h-2z"/><path fill="#848200" d="M11 6h1v1h-1zM11 7h1v1h-1zM14 7h1v1h-1zM10 8h2v1h-2zM13 8h2v1h-2zM9 9h2v1h-2zM14 9h1v1h-1zM7 10h6v1h-6zM6 11h6v1h-6zM6 12h5v1h-5zM6 13h1v1h-1z"/></svg>
<svg style="left:87px;top:138px" width="16" height="16" shape-rendering="crispEdges"><path fill="#00ff00" d="M0 0h16v1h-16zM0 1h1v1h-1zM15 1h1v1h-1zM0 2h1v1h-1zM15 2h1v1h-1zM0 3h1v1h-1zM15 3h1v1h-1zM0 4h1v1h-1zM15 4h1v1h-1zM0 5h1v1h-1zM15 5h1v1h-1zM0 6h1v1h-1zM15 6h1v1h-1zM0 7h1v1h-1zM15 7h1v1h-1zM0 8h1v1h-1zM15 8h1v1h-1zM0 9h1v1h-1zM15 9h1v1h-1zM0 10h1v1h-1zM15 10h1v1h-1zM0 11h1v1h-1zM15 11h1v1h-1zM0 12h1v1h-1zM15 12h1v1h-1zM0 13h1v1h-1zM15 13h1v1h-1zM0 14h1v1h-1zM15 14h1v1h-1zM0 15h16v1h-16z"/><path fill="#000000" d="M1 1h14v1h-14zM1 2h1v1h-1zM3 2h1v1h-1zM11 2h2v1h-2zM14 2h1v1h-1zM1 3h14v1h-14zM1 4h2v1h-2zM4 4h1v1h-1zM6 4h1v1h-1zM8 4h1v1h-1zM10 4h1v1h-1zM12 4h1v1h-1zM14 4h1v1h-1zM1 5h14v1h-14zM1 6h2v1h-2zM4 6h1v1h-1zM6 6h1v1h-1zM8 6h1v1h-1zM10 6h1v1h-1zM12 6h1v1h-1zM14 6h1v1h-1zM1 7h14v1h-14zM1 8h1v1h-1zM14 8h1v1h-1zM1 9h1v1h-1zM14 9h1v1h-1zM1 10h2v1h-2zM4 10h1v1h-1zM6 10h1v1h-1zM8 10h1v1h-1zM10 10h1v1h-1zM12 10h1v1h-1zM14 10h1v1h-1zM1 11h14v1h-14zM1 12h2v1h-2zM4 12h1v1h-1zM6 12h1v1h-1zM8 12h1v1h-1zM10 12h1v1h-1zM12 12h1v1h-1zM14 12h1v1h-1zM1 13h14v1h-14z"/><path fill="#ffffff" d="M2 2h1v1h-1zM4 2h7v1h-7zM13 2h1v1h-1zM3 4h1v1h-1zM5 4h1v1h-1zM7 4h1v1h-1zM9 4h1v1h-1zM11 4h1v1h-1zM13 4h1v1h-1zM3 6h1v1h-1zM5 6h1v1h-1zM7 6h1v1h-1zM9 6h1v1h-1zM11 6h1v1h-1zM13 6h1v1h-1zM2 8h12v1h-12zM2 9h12v1h-12zM3 10h1v1h-1zM5 10h1v1h-1zM7 10h1v1h-1zM9 10h1v1h-1zM11 10h1v1h-1zM13 10h1v1h-1zM3 12h1v1h-1zM5 12h1v1h-1zM7 12h1v1h-1zM9 12h1v1h-1zM11 12h1v1h-1zM13 12h1v1h-1z"/><path fill="#efdbef" d="M1 14h14v1h-14z"/></svg>
<svg style="left:112px;top:154px" width="16" height="16" shape-rendering="crispEdges"><path fill="#adaaad" d="M0 0h16v1h-16zM0 1h2v1h-2zM15 1h1v1h-1zM0 2h2v1h-2zM15 2h1v1h-1zM0 3h2v1h-2zM15 3h1v1h-1zM0 4h2v1h-2zM15 4h1v1h-1zM0 5h2v1h-2zM15 5h1v1h-1zM0 6h2v1h-2zM15 6h1v1h-1zM0 7h2v1h-2zM15 7h1v1h-1zM0 8h2v1h-2zM15 8h1v1h-1zM0 9h2v1h-2zM15 9h1v1h-1zM0 10h2v1h-2zM15 10h1v1h-1zM0 11h2v1h-2zM15 11h1v1h-1zM0 12h2v1h-2zM15 12h1v1h-1zM0 13h16v1h-16zM0 14h14v1h-14zM15 14h1v1h-1zM0 15h16v1h-16z"/><path fill="#dedfde" d="M2 1h11v1h-11zM14 1h1v1h-1zM2 2h1v1h-1zM14 2h1v1h-1zM2 3h1v1h-1zM14 3h1v1h-1zM2 4h1v1h-1zM14 4h1v1h-1zM2 5h1v1h-1zM14 5h1v1h-1zM2 6h1v1h-1zM14 6h1v1h-1zM2 7h1v1h-1zM14 7h1v1h-1zM2 8h1v1h-1zM14 8h1v1h-1zM2 9h1v1h-1zM14 9h1v1h-1zM2 10h1v1h-1zM14 10h1v1h-1zM2 11h1v1h-1zM14 11h1v1h-1zM2 12h11v1h-11zM14 12h1v1h-1z"/><path fill="#cecbce" d="M13 1h1v1h-1zM3 2h11v1h-11zM3 3h11v1h-11zM3 4h11v1h-11zM3 5h11v1h-11zM3 6h11v1h-11zM3 7h11v1h-11zM3 8h11v1h-11zM3 9h11v1h-11zM3 10h11v1h-11zM3 11h11v1h-11zM13 12h1v1h-1z"/><path fill="#ffffff" d="M14 14h1v1h-1z"/></svg>
<svg style="left:112px;top:170px" width="16" height="16" shape-rendering="crispEdges"><path fill="#adaaad" d="M0 0h16v1h-16zM0 1h2v1h-2zM15 1h1v1h-1zM0 2h2v1h-2zM15 2h1v1h-1zM0 3h2v1h-2zM15 3h1v1h-1zM0 4h2v1h-2zM15 4h1v1h-1zM0 5h2v1h-2zM15 5h1v1h-1zM0 6h2v1h-2zM15 6h1v1h-1zM0 7h2v1h-2zM15 7h1v1h-1zM0 8h2v1h-2zM15 8h1v1h-1zM0 9h2v1h-2zM15 9h1v1h-1zM0 10h2v1h-2zM15 10h1v1h-1zM0 11h2v1h-2zM15 11h1v1h-1zM0 12h2v1h-2zM15 12h1v1h-1zM0 13h16v1h-16zM0 14h14v1h-14zM15 14h1v1h-1zM0 15h16v1h-16z"/><path fill="#dedfde" d="M2 1h11v1h-11zM14 1h1v1h-1zM2 2h1v1h-1zM14 2h1v1h-1zM2 3h1v1h-1zM14 3h1v1h-1zM2 4h1v1h-1zM14 4h1v1h-1zM2 5h1v1h-1zM14 5h1v1h-1zM2 6h1v1h-1zM14 6h1v1h-1zM2 7h1v1h-1zM14 7h1v1h-1zM2 8h1v1h-1zM14 8h1v1h-1zM2 9h1v1h-1zM14 9h1v1h-1zM2 10h1v1h-1zM14 10h1v1h-1zM2 11h1v1h-1zM14 11h1v1h-1zM2 12h11v1h-11zM14 12h1v1h-1z"/><path fill="#cecbce" d="M13 1h1v1h-1zM3 2h11v1h-11zM3 3h11v1h-11zM3 4h4v1h-4zM9 4h5v1h-5zM3 5h3v1h-3zM9 5h5v1h-5zM3 6h2v1h-2zM6 6h1v1h-1zM9 6h5v1h-5zM3 7h4v1h-4zM9 7h5v1h-5zM3 8h4v1h-4zM9 8h5v1h-5zM3 9h4v1h-4zM9 9h5v1h-5zM3 10h4v1h-4zM9 10h5v1h-5zM3 11h4v1h-4zM9 11h5v1h-5zM13 12h1v1h-1z"/><path fill="#000000" d="M7 4h2v1h-2zM6 5h3v1h-3zM5 6h1v1h-1zM7 6h2v1h-2zM7 7h2v1h-2zM7 8h2v1h-2zM7 9h2v1h-2zM7 10h2v1h-2zM7 11h2v1h-2z"/><path fill="#ffffff" d="M14 14h1v1h-1z"/></svg>
<svg style="left:395px;top:217px" width="16" height="16" shape-rendering="crispEdges"><path fill="#adaaad" d="M0 0h16v1h-16zM0 1h2v1h-2zM15 1h1v1h-1zM0 2h2v1h-2zM15 2h1v1h-1zM0 3h2v1h-2zM15 3h1v1h-1zM0 4h2v1h-2zM15 4h1v1h-1zM0 5h2v1h-2zM15 5h1v1h-1zM0 6h2v1h-2zM15 6h1v1h-1zM0 7h2v1h-2zM15 7h1v1h-1zM0 8h2v1h-2zM15 8h1v1h-1zM0 9h2v1h-2zM15 9h1v1h-1zM0 10h2v1h-2zM15 10h1v1h-1zM0 11h2v1h-2zM15 11h1v1h-1zM0 12h2v1h-2zM15 12h1v1h-1zM0 13h16v1h-16zM0 14h14v1h-14zM15 14h1v1h-1zM0 15h16v1h-16z"/><path fill="#dedfde" d="M2 1h11v1h-11zM14 1h1v1h-1zM2 2h1v1h-1zM14 2h1v1h-1zM2 3h1v1h-1zM14 3h1v1h-1zM2 4h1v1h-1zM14 4h1v1h-1zM2 5h1v1h-1zM14 5h1v1h-1zM2 6h1v1h-1zM14 6h1v1h-1zM2 7h1v1h-1zM14 7h1v1h-1zM2 8h1v1h-1zM14 8h1v1h-1zM2 9h1v1h-1zM14 9h1v1h-1zM2 10h1v1h-1zM14 10h1v1h-1zM2 11h1v1h-1zM14 11h1v1h-1zM2 12h11v1h-11zM14 12h1v1h-1z"/><path fill="#cecbce" d="M13 1h1v1h-1zM3 2h11v1h-11zM3 3h11v1h-11zM3 4h4v1h-4zM9 4h5v1h-5zM3 5h3v1h-3zM9 5h5v1h-5zM3 6h2v1h-2zM6 6h1v1h-1zM9 6h5v1h-5zM3 7h4v1h-4zM9 7h5v1h-5zM3 8h4v1h-4zM9 8h5v1h-5zM3 9h4v1h-4zM9 9h5v1h-5zM3 10h4v1h-4zM9 10h5v1h-5zM3 11h4v1h-4zM9 11h5v1h-5zM13 12h1v1h-1z"/><path fill="#000000" d="M7 4h2v1h-2zM6 5h3v1h-3zM5 6h1v1h-1zM7 6h2v1h-2zM7 7h2v1h-2zM7 8h2v1h-2zM7 9h2v1h-2zM7 10h2v1h-2zM7 11h2v1h-2z"/><path fill="#ffffff" d="M14 14h1v1h-1z"/></svg>
<svg style="left:369px;top:724px" width="16" height="16" shape-rendering="crispEdges"><path fill="#adaaad" d="M0 0h16v1h-16zM0 1h2v1h-2zM15 1h1v1h-1zM0 2h2v1h-2zM15 2h1v1h-1zM0 3h2v1h-2zM15 3h1v1h-1zM0 4h2v1h-2zM15 4h1v1h-1zM0 5h2v1h-2zM15 5h1v1h-1zM0 6h2v1h-2zM15 6h1v1h-1zM0 7h2v1h-2zM15 7h1v1h-1zM0 8h2v1h-2zM15 8h1v1h-1zM0 9h2v1h-2zM15 9h1v1h-1zM0 10h2v1h-2zM15 10h1v1h-1zM0 11h2v1h-2zM15 11h1v1h-1zM0 12h2v1h-2zM15 12h1v1h-1zM0 13h16v1h-16zM0 14h14v1h-14zM15 14h1v1h-1zM0 15h16v1h-16z"/><path fill="#dedfde" d="M2 1h11v1h-11zM14 1h1v1h-1zM2 2h1v1h-1zM14 2h1v1h-1zM2 3h1v1h-1zM14 3h1v1h-1zM2 4h1v1h-1zM14 4h1v1h-1zM2 5h1v1h-1zM14 5h1v1h-1zM2 6h1v1h-1zM14 6h1v1h-1zM2 7h1v1h-1zM14 7h1v1h-1zM2 8h1v1h-1zM14 8h1v1h-1zM2 9h1v1h-1zM14 9h1v1h-1zM2 10h1v1h-1zM14 10h1v1h-1zM2 11h1v1h-1zM14 11h1v1h-1zM2 12h11v1h-11zM14 12h1v1h-1z"/><path fill="#cecbce" d="M13 1h1v1h-1zM3 2h11v1h-11zM3 3h11v1h-11zM3 4h11v1h-11zM3 5h11v1h-11zM3 6h11v1h-11zM3 7h11v1h-11zM3 8h11v1h-11zM3 9h11v1h-11zM3 10h11v1h-11zM3 11h11v1h-11zM13 12h1v1h-1z"/><path fill="#ffffff" d="M14 14h1v1h-1z"/></svg>
<svg style="left:13px;top:94px" width="9" height="9" shape-rendering="crispEdges"><rect x="0.5" y="0.5" width="8" height="8" fill="#ffffff" stroke="#848284" stroke-width="1"/><rect x="2" y="4" width="5" height="1" fill="#000000"/></svg>
<svg style="left:38px;top:110px" width="9" height="9" shape-rendering="crispEdges"><rect x="0.5" y="0.5" width="8" height="8" fill="#ffffff" stroke="#848284" stroke-width="1"/><rect x="2" y="4" width="5" height="1" fill="#000000"/><rect x="4" y="2" width="1" height="5" fill="#000000"/></svg>
<svg style="left:38px;top:126px" width="9" height="9" shape-rendering="crispEdges"><rect x="0.5" y="0.5" width="8" height="8" fill="#ffffff" stroke="#848284" stroke-width="1"/><rect x="2" y="4" width="5" height="1" fill="#000000"/></svg>
<svg style="left:63px;top:142px" width="9" height="9" shape-rendering="crispEdges"><rect x="0.5" y="0.5" width="8" height="8" fill="#ffffff" stroke="#848284" stroke-width="1"/><rect x="2" y="4" width="5" height="1" fill="#000000"/></svg>
<svg style="left:0;top:0" width="320" height="200" shape-rendering="crispEdges" fill="#848284"><rect x="23" y="98" width="1" height="1"/><rect x="25" y="98" width="1" height="1"/><rect x="27" y="98" width="1" height="1"/><rect x="29" y="98" width="1" height="1"/><rect x="42" y="106" width="1" height="1"/><rect x="42" y="108" width="1" height="1"/><rect x="42" y="120" width="1" height="1"/><rect x="42" y="122" width="1" height="1"/><rect x="42" y="124" width="1" height="1"/><rect x="48" y="114" width="1" height="1"/><rect x="48" y="130" width="1" height="1"/><rect x="50" y="114" width="1" height="1"/><rect x="50" y="130" width="1" height="1"/><rect x="52" y="114" width="1" height="1"/><rect x="52" y="130" width="1" height="1"/><rect x="54" y="114" width="1" height="1"/><rect x="54" y="130" width="1" height="1"/><rect x="67" y="138" width="1" height="1"/><rect x="67" y="140" width="1" height="1"/><rect x="73" y="146" width="1" height="1"/><rect x="75" y="146" width="1" height="1"/><rect x="77" y="146" width="1" height="1"/><rect x="79" y="146" width="1" height="1"/><rect x="92" y="154" width="1" height="1"/><rect x="92" y="156" width="1" height="1"/><rect x="92" y="158" width="1" height="1"/><rect x="92" y="160" width="1" height="1"/><rect x="92" y="162" width="1" height="1"/><rect x="92" y="164" width="1" height="1"/><rect x="92" y="166" width="1" height="1"/><rect x="92" y="168" width="1" height="1"/><rect x="92" y="170" width="1" height="1"/><rect x="92" y="172" width="1" height="1"/><rect x="92" y="174" width="1" height="1"/><rect x="92" y="176" width="1" height="1"/><rect x="92" y="178" width="1" height="1"/><rect x="94" y="162" width="1" height="1"/><rect x="94" y="178" width="1" height="1"/><rect x="96" y="162" width="1" height="1"/><rect x="96" y="178" width="1" height="1"/><rect x="98" y="162" width="1" height="1"/><rect x="98" y="178" width="1" height="1"/><rect x="100" y="162" width="1" height="1"/><rect x="100" y="178" width="1" height="1"/><rect x="102" y="162" width="1" height="1"/><rect x="102" y="178" width="1" height="1"/><rect x="104" y="162" width="1" height="1"/><rect x="104" y="178" width="1" height="1"/></svg>
<svg style="left:765px;top:222px" width="7" height="4" shape-rendering="crispEdges" fill="#000000"><rect x="0" y="0" width="7" height="1"/><rect x="1" y="1" width="5" height="1"/><rect x="2" y="2" width="3" height="1"/><rect x="3" y="3" width="1" height="1"/></svg>
<svg style="left:779px;top:372px" width="7" height="4" shape-rendering="crispEdges" fill="#000000"><rect x="0" y="0" width="7" height="1"/><rect x="1" y="1" width="5" height="1"/><rect x="2" y="2" width="3" height="1"/><rect x="3" y="3" width="1" height="1"/></svg>
<svg style="left:762px;top:730px" width="7" height="4" shape-rendering="crispEdges" fill="#000000"><rect x="0" y="0" width="7" height="1"/><rect x="1" y="1" width="5" height="1"/><rect x="2" y="2" width="3" height="1"/><rect x="3" y="3" width="1" height="1"/></svg>
<svg style="left:0;top:0" width="929" height="789" shape-rendering="crispEdges" fill="#000000"><rect x="371" y="256" width="5" height="1"/><rect x="397" y="277" width="7" height="1"/><rect x="398" y="298" width="6" height="1"/><rect x="401" y="319" width="7" height="1"/><rect x="360" y="661" width="7" height="1"/><rect x="367" y="679" width="2" height="1"/><rect x="360" y="715" width="6" height="1"/></svg>
<svg style="left:6px;top:3px" width="16" height="16" shape-rendering="crispEdges"><path fill="#ffd321" d="M6 0h2v1h-2zM1 1h3v1h-3zM6 1h3v1h-3zM0 2h5v1h-5zM6 2h2v1h-2zM11 2h2v1h-2zM0 3h8v1h-8zM10 3h5v1h-5zM1 4h7v1h-7zM9 4h6v1h-6zM2 5h6v1h-6zM9 5h6v1h-6zM2 6h6v1h-6zM9 6h6v1h-6zM2 7h6v1h-6zM11 7h3v1h-3zM2 8h5v1h-5zM10 8h3v1h-3zM3 9h4v1h-4zM4 10h2v1h-2zM8 11h2v1h-2zM8 12h2v1h-2z"/><path fill="#c6c3c6" d="M9 1h5v1h-5zM8 2h1v1h-1zM13 2h2v1h-2zM8 3h1v1h-1zM15 3h1v1h-1zM8 4h1v1h-1zM15 4h1v1h-1zM8 5h1v1h-1zM15 5h1v1h-1zM8 6h1v1h-1zM15 6h1v1h-1zM8 7h2v1h-2zM15 7h1v1h-1zM9 8h1v1h-1zM13 8h2v1h-2zM10 9h5v1h-5zM1 15h1v1h-1z"/><path fill="#000000" d="M7 8h2v1h-2zM7 9h2v1h-2zM6 10h2v1h-2zM4 11h3v1h-3zM3 12h3v1h-3zM2 13h3v1h-3zM1 14h3v1h-3z"/></svg>
</body></html>
